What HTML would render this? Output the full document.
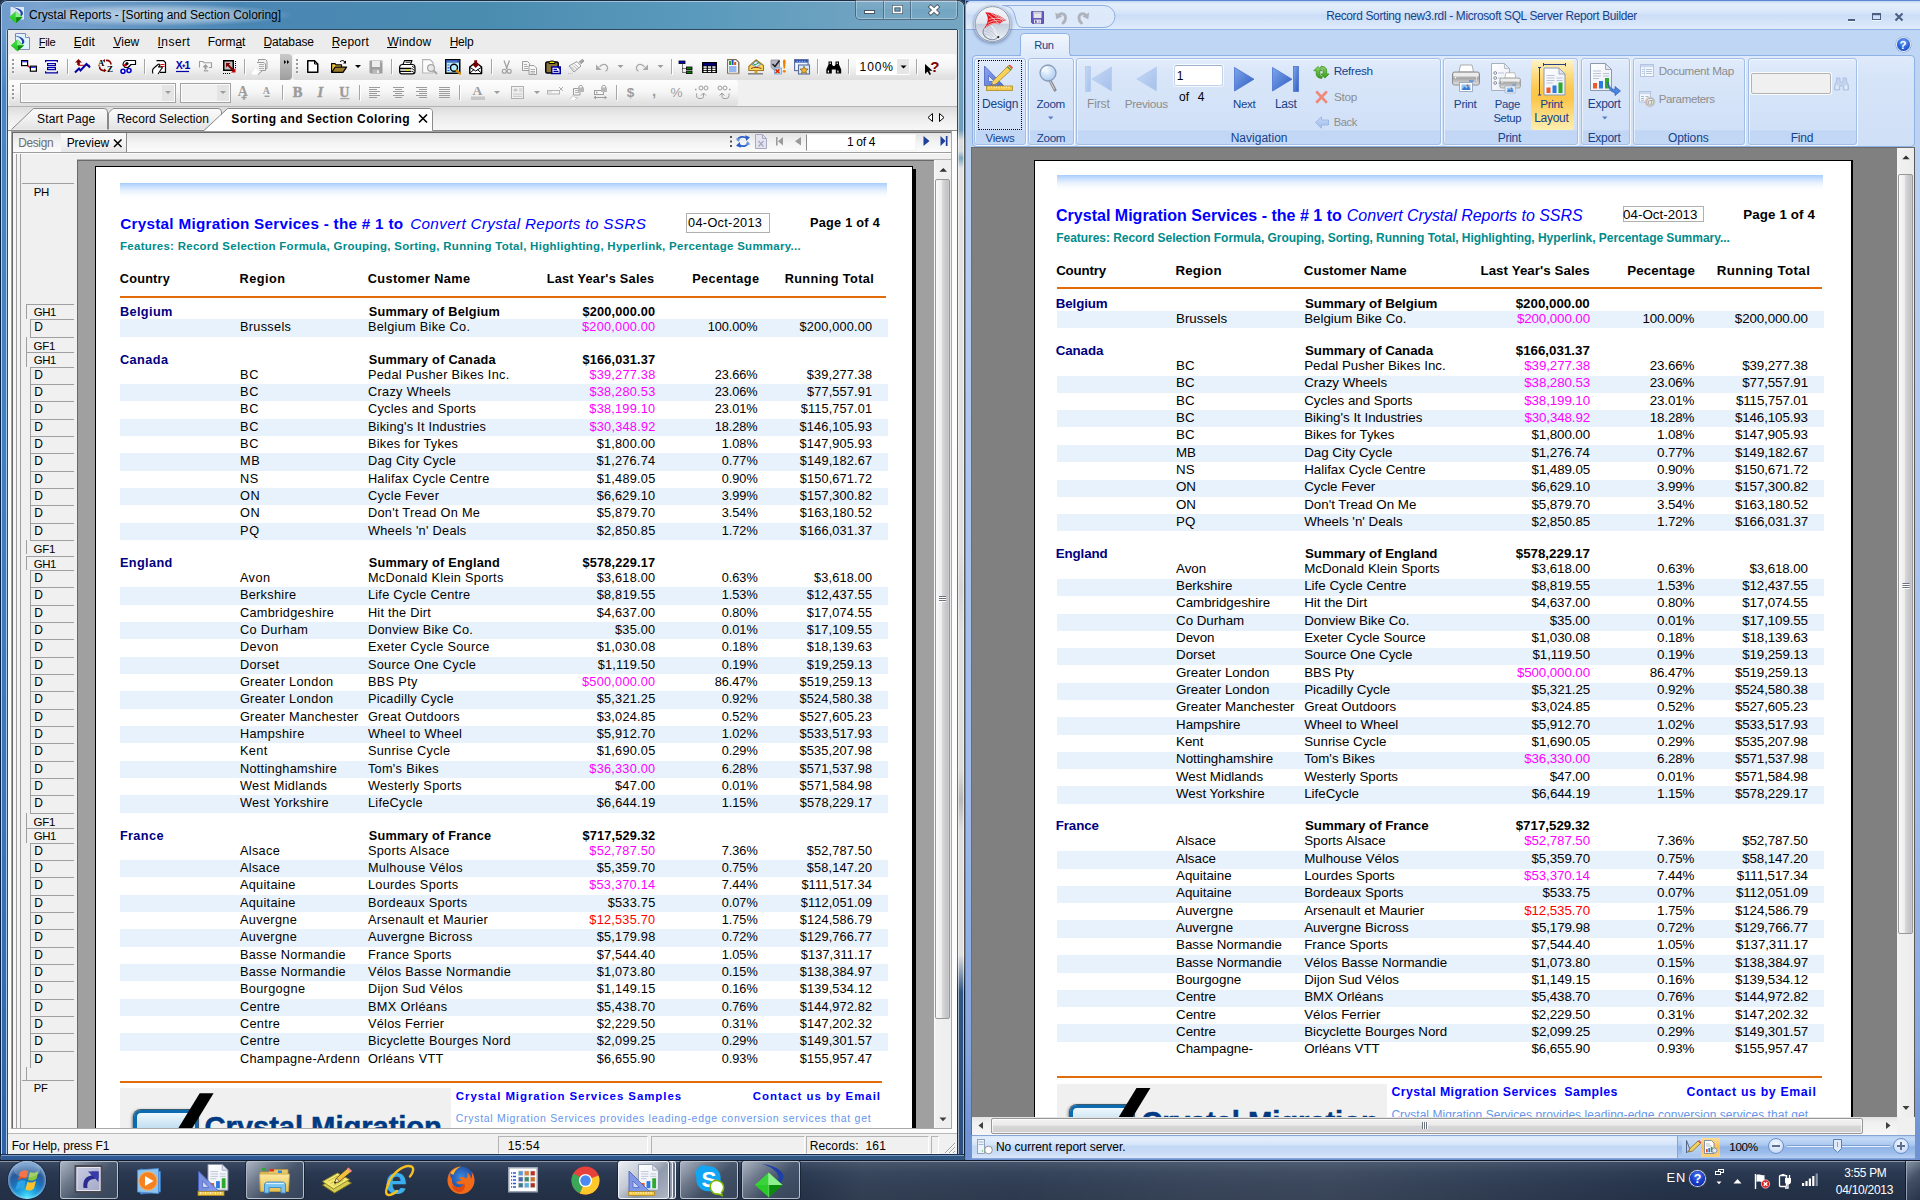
<!DOCTYPE html>
<html lang="en"><head><meta charset="utf-8"><title>Crystal Reports vs SQL Server Report Builder</title><style>
html,body{margin:0;padding:0}
body{width:1920px;height:1200px;position:relative;overflow:hidden;background:#1d2d49;font-family:"Liberation Sans",sans-serif;font-size:12px;color:#000}
.a{position:absolute;display:block}
.t{position:absolute;display:block;white-space:pre;line-height:1}
svg{overflow:visible}
</style></head>
<body>
<!-- desk -->
<div class="a" style="left:0px;top:0px;width:1920px;height:1200px;background:#1f3350;"></div>
<!-- left -->
<div class="a" style="left:0px;top:0px;width:965px;height:1161px;border-radius:7px 7px 5px 5px;background:linear-gradient(90deg,#6d9bcd 0px,#7aa3cf 40px,#4a86b4 240px,#4a8cb0 480px,#5a9abc 700px,#72a4c2 880px,#74a6c2 965px);box-shadow:inset 0 0 0 1px #1b2c45, inset 0 0 0 2px rgba(255,255,255,.45);"></div>
<div class="a" style="left:0px;top:30px;width:8px;height:1125px;background:linear-gradient(90deg,#0a2440 0,#0a2440 1px,#b4d0ee 1px,#b4d0ee 2px,#4482c6 2px,#3e7ec2 6px,#a8cae8 6px,#a8cae8 7px,#2a4a6c 7px);"></div>
<div class="a" style="left:2px;top:30px;width:4px;height:1125px;background:linear-gradient(180deg,#6a98cc 0,#4a86c6 60px,#4080c4 400px,#3a74bc 800px,#2f62a8 1125px);"></div>
<div class="a" style="left:957px;top:30px;width:8px;height:1125px;background:linear-gradient(180deg,#74a3c2 0,#6f9ebc 100px,#dcdcdc 110px,#d6dbde 121px,#7aa5c0 128px,#dfe2e4 138px,#e2e2e2 150px,#e0e0e0 520px,#d4d4d4 560px,#e0e0e0 600px,#dcdcdc 740px,#b8b8b8 770px,#dedede 800px,#e0e0e0 925px,#2f5583 962px,#2c4f80 1125px);"></div>
<div class="a" style="left:957px;top:30px;width:1px;height:1125px;background:linear-gradient(180deg,#2a4a60 0,#2a4a60 100px,#707070 112px,#707070 925px,#1a3050 962px);"></div>
<div class="a" style="left:958px;top:30px;width:1px;height:1125px;background:rgba(255,255,255,.55);"></div>
<div class="a" style="left:963px;top:30px;width:1px;height:1125px;background:rgba(255,255,255,.6);"></div>
<div class="a" style="left:964px;top:30px;width:1px;height:1125px;background:linear-gradient(180deg,#1e3a50 0,#1e3a50 100px,#555 112px,#555 925px,#0c1e38 962px);"></div>
<div class="a" style="left:1px;top:1154px;width:963px;height:7px;background:linear-gradient(180deg,#1a3050 0,#1a3050 1px,#7a9ac0 1px,#7a9ac0 2px,#2f5a98 2px,#2c5590 6px,#0c1a30 6px);border-radius:0 0 5px 5px;"></div>
<div class="a" style="left:500px;top:1156px;width:464px;height:4px;background:linear-gradient(90deg,rgba(47,85,128,0),#2f5580 60%);"></div>
<div class="a" style="left:22px;top:4px;width:270px;height:22px;background:radial-gradient(ellipse at center,rgba(255,255,255,.62) 0,rgba(255,255,255,.35) 45%,rgba(255,255,255,0) 72%);"></div>
<span class="t" style="left:29px;top:8px;font-size:12px;line-height:14px;letter-spacing:-0.015px;">Crystal Reports - [Sorting and Section Coloring]</span>
<div class="a" style="left:855px;top:0px;width:103px;height:20px;border:1px solid rgba(40,60,80,.55);border-top:none;border-radius:0 0 5px 5px;box-sizing:border-box;background:linear-gradient(180deg,rgba(255,255,255,.1) 0,rgba(255,255,255,.05) 45%,rgba(255,255,255,0) 50%,rgba(255,255,255,.04) 100%);box-shadow:inset 0 0 0 1px rgba(255,255,255,.3);"></div>
<div class="a" style="left:883px;top:1px;width:1px;height:18px;background:rgba(40,60,80,.5);box-shadow:1px 0 0 rgba(255,255,255,.3);"></div>
<div class="a" style="left:910px;top:1px;width:1px;height:18px;background:rgba(40,60,80,.5);box-shadow:1px 0 0 rgba(255,255,255,.3);"></div>
<svg class="a" style="left:855px;top:0px;" width="103" height="20" viewBox="0 0 103 20"><rect x="9.5" y="10.5" width="10" height="3" fill="#fff" stroke="#4a5560" stroke-width="1"/><rect x="37.5" y="5.5" width="10" height="8" fill="none" stroke="#4a5560" stroke-width="1"/><rect x="38.5" y="6.5" width="8" height="6" fill="none" stroke="#fff" stroke-width="1.6"/><rect x="40" y="8" width="5" height="3" fill="none" stroke="#4a5560" stroke-width=".8"/><path d="M75.8 7l6.4 6M82.2 7l-6.4 6" fill="none" stroke="#4a5560" stroke-width="4.4" stroke-linecap="square"/><path d="M75.8 7l6.4 6M82.2 7l-6.4 6" fill="none" stroke="#fff" stroke-width="2.6" stroke-linecap="square"/></svg>
<div class="a" style="left:8px;top:30px;width:949px;height:1124px;background:#f0f0f0;"></div>
<div class="a" style="left:8px;top:29px;width:949px;height:1px;background:#2a4a60;"></div>
<div class="a" style="left:8px;top:30px;width:949px;height:24px;background:#ececec;"></div>
<span class="t" style="left:38.71px;top:36px;font-size:11.18px;line-height:12px;letter-spacing:-0.322px;">File</span>
<div class="a" style="left:39.3px;top:47px;width:5.83px;height:1px;background:#000;"></div>
<span class="t" style="left:73.64px;top:35px;font-size:12px;line-height:14px;letter-spacing:0.173px;">Edit</span>
<div class="a" style="left:74.3px;top:47px;width:6.5px;height:1px;background:#000;"></div>
<span class="t" style="left:113.6px;top:35px;font-size:12px;line-height:14px;letter-spacing:-0.033px;">View</span>
<div class="a" style="left:113.3px;top:47px;width:6.5px;height:1px;background:#000;"></div>
<span class="t" style="left:157.52px;top:35px;font-size:12px;line-height:14px;letter-spacing:0.456px;">Insert</span>
<div class="a" style="left:158.3px;top:47px;width:5px;height:1px;background:#000;"></div>
<span class="t" style="left:207.64px;top:35px;font-size:12px;line-height:14px;letter-spacing:-0.044px;">Format</span>
<div class="a" style="left:235.5px;top:47px;width:6px;height:1px;background:#000;"></div>
<span class="t" style="left:263.39px;top:35px;font-size:12px;line-height:14px;letter-spacing:-0.103px;">Database</span>
<div class="a" style="left:264.05px;top:47px;width:7.17px;height:1px;background:#000;"></div>
<span class="t" style="left:331.64px;top:35px;font-size:12px;line-height:14px;letter-spacing:0.232px;">Report</span>
<div class="a" style="left:332.3px;top:47px;width:7.17px;height:1px;background:#000;"></div>
<span class="t" style="left:387.6px;top:35px;font-size:12px;line-height:14px;letter-spacing:0.196px;">Window</span>
<div class="a" style="left:387.3px;top:47px;width:9.83px;height:1px;background:#000;"></div>
<span class="t" style="left:449.64px;top:35px;font-size:12px;line-height:14px;letter-spacing:-0.173px;">Help</span>
<div class="a" style="left:450.3px;top:47px;width:7.17px;height:1px;background:#000;"></div>
<svg class="a" style="left:0;top:0;pointer-events:none" width="1920" height="1200" viewBox="0 0 1920 1200"><g transform="translate(9,7)"><rect x="1.5" y="0" width="13.5" height="12.5" fill="#fff" opacity=".75"/><g transform="translate(.3,.2)"><g transform="scale(0.47)"><path d="M7 0C18 1 29 6 29 13C29 17 26 19.5 21.5 20C24 17.5 25 14.5 23.5 11C21.5 6.5 15 2 7 0z" fill="#1c3fa8"/><path d="M14 9L28 21.5L14 34L0 21.5z" fill="#14b814"/><path d="M14 9L28 21.5H0z" fill="#58e058"/><path d="M14 9V34L0 21.5z" fill="#30d030" opacity=".75"/><path d="M14 9L28 21.5H14z" fill="#b0f8b0" opacity=".6"/><path d="M14 21.5L28 21.5L14 34z" fill="#0a8a0a"/><path d="M14 9V34" stroke="#d8ffd8" stroke-width=".6" opacity=".7"/></g></g></g><g transform="translate(11,33)"><path d="M4.5 .5H14.5L18.5 4.5V16.5H4.5z" fill="#dff4ff" stroke="#8a8ab8" stroke-width="1"/><path d="M14.5 .5V4.5H18.5" fill="#fff" stroke="#8a8ab8" stroke-width="1"/><g transform="translate(0,2.5)"><g transform="scale(0.46)"><path d="M7 0C18 1 29 6 29 13C29 17 26 19.5 21.5 20C24 17.5 25 14.5 23.5 11C21.5 6.5 15 2 7 0z" fill="#1c3fa8"/><path d="M14 9L28 21.5L14 34L0 21.5z" fill="#14b814"/><path d="M14 9L28 21.5H0z" fill="#58e058"/><path d="M14 9V34L0 21.5z" fill="#30d030" opacity=".75"/><path d="M14 9L28 21.5H14z" fill="#b0f8b0" opacity=".6"/><path d="M14 21.5L28 21.5L14 34z" fill="#0a8a0a"/><path d="M14 9V34" stroke="#d8ffd8" stroke-width=".6" opacity=".7"/></g></g></g></svg>
<div class="a" style="left:9px;top:54px;width:271px;height:26px;background:linear-gradient(180deg,#fdfdfd 0,#f6f6f6 45%,#e3e3e3 85%,#dedede 100%);border-radius:3px 0 0 3px;"></div>
<div class="a" style="left:280px;top:54px;width:12px;height:26px;background:linear-gradient(180deg,#c9c9c9 0,#9e9e9e 100%);border-radius:0 4px 4px 0;"></div>
<div class="a" style="left:293px;top:54px;width:663px;height:26px;background:linear-gradient(180deg,#fdfdfd 0,#f6f6f6 45%,#e3e3e3 85%,#dedede 100%);border-radius:3px;"></div>
<div class="a" style="left:9px;top:80px;width:729px;height:26px;background:linear-gradient(180deg,#fdfdfd 0,#f6f6f6 45%,#e3e3e3 85%,#dedede 100%);border-radius:3px;"></div>
<svg class="a" style="left:0;top:0;pointer-events:none" width="1920" height="1200" viewBox="0 0 1920 1200"><rect x="12" y="59" width="2" height="2" fill="#9a9a9a"/><rect x="14" y="61" width="1" height="1" fill="#fff"/><rect x="12" y="63" width="2" height="2" fill="#9a9a9a"/><rect x="14" y="65" width="1" height="1" fill="#fff"/><rect x="12" y="67" width="2" height="2" fill="#9a9a9a"/><rect x="14" y="69" width="1" height="1" fill="#fff"/><rect x="12" y="71" width="2" height="2" fill="#9a9a9a"/><rect x="14" y="73" width="1" height="1" fill="#fff"/><rect x="296" y="59" width="2" height="2" fill="#9a9a9a"/><rect x="298" y="61" width="1" height="1" fill="#fff"/><rect x="296" y="63" width="2" height="2" fill="#9a9a9a"/><rect x="298" y="65" width="1" height="1" fill="#fff"/><rect x="296" y="67" width="2" height="2" fill="#9a9a9a"/><rect x="298" y="69" width="1" height="1" fill="#fff"/><rect x="296" y="71" width="2" height="2" fill="#9a9a9a"/><rect x="298" y="73" width="1" height="1" fill="#fff"/><g transform="translate(21,60)"><path d="M6.5 5.5L10 8.5" stroke="#e00000" stroke-width="1.3"/><rect x=".6" y=".6" width="6" height="5" fill="#fff" stroke="#000" stroke-width="1.2"/><rect x="1.2" y="1.2" width="4.8" height="1.1" fill="#2020ff"/><rect x="9.4" y="6.2" width="6" height="5" fill="#fff" stroke="#000" stroke-width="1.2"/><rect x="10" y="6.8" width="4.8" height="1.1" fill="#2020ff"/></g><g transform="translate(45,60)"><path d="M.6 2.2V.6H12.4V2.2 M.6 11.3V12.9H12.4V11.3" fill="none" stroke="#0000a8" stroke-width="1.2"/><rect x="2.6" y="3.6" width="7.8" height="2" fill="#fff" stroke="#0000a8" stroke-width="1.2"/><rect x="2.6" y="7.6" width="7.8" height="2" fill="#fff" stroke="#0000a8" stroke-width="1.2"/></g><path d="M67.5 59V74" stroke="#a6a6a6" stroke-width="1"/><path d="M68.5 60V75" stroke="#fff" stroke-width="1"/><g transform="translate(75,59)"><path d="M3.5 0L7 3.5H4.8V6H2.2V3.5H0z" fill="#800000"/><path d="M3 6.3H15" stroke="#c00000" stroke-width="1"/><path d="M0 13.5L4 9.5L5.5 11.5L11.5 5L15 8.5" fill="none" stroke="#0000a8" stroke-width="2"/></g><g transform="translate(98,59)"><text x="0" y="6.5" font-family="'Liberation Serif',serif" font-size="8.5" font-weight="bold" fill="#000" text-anchor="start" >A</text><text x="9" y="13" font-family="'Liberation Serif',serif" font-size="9" font-weight="bold" fill="#000" text-anchor="start" >Z</text><path d="M8 1.5C11 1 13 3 13 5.5" fill="none" stroke="#800000" stroke-width="1.6"/><path d="M7 0v3.5l-2.5-1.7z" fill="#800000"/><path d="M6.5 11.5C3.5 12 1.5 10 1.5 7.5" fill="none" stroke="#800000" stroke-width="1.6"/><path d="M6 9.5v3.8l2.6-1.9z" fill="#800000"/></g><g transform="translate(120,59)"><path d="M3 6C3 3 5 1.5 7 1.5H15.5V5.5H11L8 8.5H5z" fill="#fff" stroke="#000" stroke-width="1.2" stroke-linejoin="round"/><circle cx="5.5" cy="6" r="1.6" fill="#e00000"/><circle cx="7" cy="4.5" r="1.5" fill="#000"/><circle cx="3" cy="12.3" r="2" fill="#fff" stroke="#0000c8" stroke-width="1.6"/><circle cx="9" cy="11.5" r="2" fill="#fff" stroke="#0000c8" stroke-width="1.6"/></g><path d="M144.5 59V74" stroke="#a6a6a6" stroke-width="1"/><path d="M145.5 60V75" stroke="#fff" stroke-width="1"/><g transform="translate(152,60)"><path d="M4.5 .6H11.5L13.5 2.6V12.4H8" fill="#fff" stroke="#000" stroke-width="1.2"/><path d="M8.5 4.5h4M8.5 6.5h4" stroke="#e00000" stroke-width="1"/><path d="M1 13.5C0 11 .5 9 2.5 7.5L6 4.5C7.5 3.5 8.5 5 7.5 6L6.5 7H9.5C10.5 7 10.5 8.5 9.5 8.8L6 14" fill="#fff" stroke="#000" stroke-width="1.1" stroke-linejoin="round"/></g><g transform="translate(176,61)"><text x="-0.3" y="8" font-family="'Liberation Sans',serif" font-size="10.5" font-weight="bold" fill="#0000a8" text-anchor="start" >X</text><text x="8.6" y="8" font-family="'Liberation Sans',serif" font-size="10.5" font-weight="bold" fill="#0000a8" text-anchor="start" >1</text><path d="M6.3 4.8h3M7.8 3.3v3" stroke="#0000a8" stroke-width="1"/><path d="M0 10.5H13" stroke="#0000a8" stroke-width="1.2"/></g><g transform="translate(199,61)"><path d="M.5 6.5V.5H4L5 1.8H12.5V6.5H10" fill="none" stroke="#9c9c9c" stroke-width="1.1"/><path d="M6.5 3l3 3.2h-2V8.5h-2V6.2h-2z" fill="#9c9c9c"/><path d="M4.8 9.8h4.4" stroke="#9c9c9c" stroke-width="1.2"/></g><g transform="translate(223,60)"><rect x=".75" y=".75" width="9.5" height="9.5" fill="#c0c0c0" stroke="#000" stroke-width="1.5"/><path d="M12.5 1v8" stroke="#000" stroke-width="1" stroke-dasharray="1 1"/><path d="M0 13.5h8" stroke="#000" stroke-width="1" stroke-dasharray="1 1"/><path d="M4.5 4.5L11 11" stroke="#800000" stroke-width="1.8"/><path d="M3 3h4.5L3 7.5z" fill="#800000"/><path d="M12.5 12.5H8L12.5 8z" fill="#c00000"/></g><path d="M244.5 59V74" stroke="#a6a6a6" stroke-width="1"/><path d="M245.5 60V75" stroke="#fff" stroke-width="1"/><g transform="translate(252,59)"><path d="M6.5 2.5V.5H13.5L15 2V9.5H13.5M5 3.5H12L13.5 5V11.5H7" fill="#f4f4f4" stroke="#9c9c9c" stroke-width="1"/><path d="M7 5.5h5M7 7.5h5M7 9.5h5" stroke="#9c9c9c" stroke-width=".8"/><path d="M0 13.5L3.5 9L6 11.5H9L5.5 15.5H0z" fill="#fff"/><path d="M6 15.5L10 12" stroke="#9c9c9c" stroke-width="1"/></g><g transform="translate(284,60)"><path d="M0 0l2.2 2L0 4zM3 0l2.2 2L3 4z" fill="#000"/></g><g transform="translate(307,60)"><path d="M.75 .75H7.5L10.75 4V12.25H.75z" fill="#fff" stroke="#000" stroke-width="1.5" stroke-linejoin="round"/><path d="M7.5 .75V4H10.75" fill="none" stroke="#000" stroke-width="1"/></g><g transform="translate(331,59)"><path d="M.6 13.4V4.6H4L5 5.8H10.5V8" fill="#f3c53c" stroke="#000" stroke-width="1.2" stroke-linejoin="round"/><path d="M.8 13.4L4 8.2H15.6L12 13.4z" fill="#9c7a2c" stroke="#000" stroke-width="1.2" stroke-linejoin="round"/><path d="M9 2.8C10.5 1 13 1.2 14 3.2" fill="none" stroke="#000" stroke-width="1"/><path d="M15 1.5v3h-3z" fill="#000"/></g><path d="M355 65h6l-3 3z" fill="#000"/><g transform="translate(369,60)"><path d="M.5 .5H13.5V13.5H1.5L.5 12.5z" fill="#9e9e9e"/><rect x="3" y="1" width="8" height="6" fill="#ececec"/><rect x="3.5" y="9.5" width="7" height="4" fill="#b9b9b9"/><rect x="8" y="10.3" width="1.8" height="2.7" fill="#f0f0f0"/><rect x="12" y="1.5" width="1" height="1" fill="#e0e0e0"/></g><path d="M391.5 59V74" stroke="#a6a6a6" stroke-width="1"/><path d="M392.5 60V75" stroke="#fff" stroke-width="1"/><g transform="translate(399,60)"><path d="M4 4.5L5.5 .6H13L11.5 4.5" fill="#fff" stroke="#000" stroke-width="1.1" stroke-linejoin="round"/><path d="M6.5 2.3h5" stroke="#000" stroke-width=".8"/><path d="M.6 7.5C.6 5.5 2 4.5 3.5 4.5H13.5C15 4.5 16 5.5 16 7.5V11.5C16 13 15 13.8 13.5 13.8H3C1.5 13.8 .6 13 .6 11.5z" fill="#fff" stroke="#000" stroke-width="1.2"/><path d="M1 8.5H12.5M1 11.3H12.5" stroke="#000" stroke-width="1.3"/><rect x="7" y="9.5" width="3" height="1.2" fill="#f3e000"/><path d="M13 6l2.5 2M13 8.5l2.5 2M13 11l2 1.6" stroke="#000" stroke-width=".9"/></g><g transform="translate(422,59)"><path d="M.6 .6H8L11 3.6V14H.6z" fill="#fbfbfb" stroke="#b4b4b4" stroke-width="1.1"/><circle cx="9" cy="9" r="3.4" fill="#e9e9e9" stroke="#a9a9a9" stroke-width="1.3"/><path d="M11.6 11.6L15 15" stroke="#a2a2a2" stroke-width="1.8"/></g><g transform="translate(445,59)"><rect x=".75" y=".75" width="14" height="13.5" fill="#bfefff" stroke="#000" stroke-width="1.5"/><rect x="1" y="1" width="13.5" height="2.6" fill="#2a4fb0"/><path d="M2.5 2.2h10" stroke="#9fd0ff" stroke-width=".8" stroke-dasharray="1 1"/><path d="M2.5 6h2M2.5 8.8h2M2.5 11.5h2" stroke="#1e55d8" stroke-width="1.2"/><circle cx="9" cy="8.8" r="3.5" fill="#b8ecff" stroke="#000" stroke-width="1.4"/><path d="M11.8 11.6L15 14.8" stroke="#e08a00" stroke-width="2.2" stroke-linecap="round"/></g><g transform="translate(469,60)"><path d="M.75 7L6.7 2.2L12.6 7V13.6H.75z" fill="#fff" stroke="#000" stroke-width="1.4" stroke-linejoin="round"/><path d="M1 13L5 9.5M12.3 13L8.5 9.5M1.2 7.5L6.7 11L12.2 7.5" fill="none" stroke="#000" stroke-width="1"/><path d="M5.3 .3H8.1V4H10.5L6.7 8L2.9 4H5.3z" fill="#800000"/></g><path d="M491.5 59V74" stroke="#a6a6a6" stroke-width="1"/><path d="M492.5 60V75" stroke="#fff" stroke-width="1"/><g transform="translate(502,60)"><path d="M2 .5L5.2 9M7.5 .5L4.3 9" stroke="#9c9c9c" stroke-width="1.2" fill="none"/><circle cx="2.3" cy="11.3" r="2" fill="none" stroke="#9c9c9c" stroke-width="1.1"/><circle cx="7.2" cy="11.3" r="2" fill="none" stroke="#9c9c9c" stroke-width="1.1"/></g><g transform="translate(522,61)"><path d="M.5 .5H5.5L7.5 2.5V9.5H.5z" fill="#f6f6f6" stroke="#9c9c9c"/><path d="M2 3.5h3M2 5.5h4M2 7.5h4" stroke="#9c9c9c" stroke-width=".8"/><path d="M7 4.5H12L14.5 7V13.5H7z" fill="#f6f6f6" stroke="#9c9c9c"/><path d="M8.5 8.5h4.5M8.5 10.5h4.5M8.5 12h4.5" stroke="#9c9c9c" stroke-width=".8"/></g><g transform="translate(545,60)"><rect x=".75" y="2" width="12.5" height="11" rx="1.5" fill="#8a7338" stroke="#000" stroke-width="1.5"/><path d="M4 2.5C4 .5 10 .5 10 2.5V3.5H4z" fill="#f0e000" stroke="#000" stroke-width="1"/><rect x="6.75" y="7" width="8.5" height="6.5" fill="#fff" stroke="#0000a0" stroke-width="1.5"/><path d="M8.5 9.3h3.5M8.5 11.3h5" stroke="#0000a0" stroke-width="1.2"/><path d="M12.5 6.5l3 3" stroke="#0000a0" stroke-width="1.2"/></g><g transform="translate(568,59)"><path d="M11 3L14.5 .3L16 2L12.8 5" fill="#a6a6a6" stroke="#9c9c9c" stroke-width="1"/><path d="M1 7L9 2.5L13 7L6 13z" fill="#f8f8f8" stroke="#9c9c9c" stroke-width="1"/><path d="M3 7.5L7 11.5M5 6.3L9 10.3M7 5.2L10.8 9" stroke="#9c9c9c" stroke-width=".8"/><path d="M0 14.5h5" stroke="#b8b8b8" stroke-width="1" stroke-dasharray="1 1.2"/></g><g transform="translate(596,62)"><path d="M3.5 5C5 2.5 8.5 1.5 10.5 3.5C12.5 5.5 11.5 8.5 9.5 9" fill="none" stroke="#a8a8a8" stroke-width="1.3"/><path d="M0 2.5V8H5.5z" fill="#a8a8a8"/></g><path d="M617.5 65h6l-3 3z" fill="#9c9c9c"/><g transform="translate(636,62)"><path d="M8.5 5C7 2.5 3.5 1.5 1.5 3.5C-.5 5.5 .5 8.5 2.5 9" fill="none" stroke="#a8a8a8" stroke-width="1.3"/><path d="M12 2.5V8H6.5z" fill="#a8a8a8"/></g><path d="M657.5 65h6l-3 3z" fill="#9c9c9c"/><path d="M671.5 59V74" stroke="#a6a6a6" stroke-width="1"/><path d="M672.5 60V75" stroke="#fff" stroke-width="1"/><g transform="translate(679,61)"><rect x="0" y="0" width="6" height="2.6" fill="#0000e0" stroke="#000" stroke-width=".8"/><path d="M3.5 3.5V11.5M3.5 7.5H7M3.5 11.5H7" stroke="#000" stroke-width="1" stroke-dasharray="1 1" fill="none"/><rect x="7.5" y="6" width="5.5" height="2.6" fill="#008000" stroke="#000" stroke-width=".8"/><rect x="7.5" y="10" width="5.5" height="2.6" fill="#008000" stroke="#000" stroke-width=".8"/></g><g transform="translate(702,62)"><rect x="0" y="0" width="15" height="11" fill="#000"/><rect x="1.5" y="1.2" width="12" height="2.3" fill="#000080"/><rect x="1.5" y="4.3" width="3.2" height="1.5" fill="#fff"/><rect x="5.9" y="4.3" width="3.2" height="1.5" fill="#fff"/><rect x="10.3" y="4.3" width="3.2" height="1.5" fill="#fff"/><rect x="1.5" y="6.6" width="3.2" height="1.5" fill="#fff"/><rect x="5.9" y="6.6" width="3.2" height="1.5" fill="#fff"/><rect x="10.3" y="6.6" width="3.2" height="1.5" fill="#fff"/><rect x="1.5" y="8.9" width="3.2" height="1.2" fill="#fff"/><rect x="5.9" y="8.9" width="3.2" height="1.2" fill="#fff"/><rect x="10.3" y="8.9" width="3.2" height="1.2" fill="#fff"/></g><g transform="translate(727,59)"><path d="M.6 .6H9L11.5 3V14.2H.6z" fill="#fff" stroke="#7a6a58" stroke-width="1.1"/><rect x="2" y="2" width="2" height="4" fill="#2aa02a"/><rect x="4.6" y="1" width="2" height="5" fill="#1e50d0"/><rect x="7.2" y="3" width="2" height="3" fill="#e05010"/><path d="M2 8h7.5M2 10h7.5M2 12h7.5" stroke="#2a70e0" stroke-width="1.1"/><path d="M12.3 3V14.8H1.5" stroke="#b0a898" stroke-width="1" fill="none"/></g><g transform="translate(748,59)"><path d="M.8 7.5L8 .8L15.5 6.5V11.5H.8z" fill="#f5d860" stroke="#a07820" stroke-width="1.1" stroke-linejoin="round"/><path d="M4 5.5L8 2L12.5 5.5L8.5 8z" fill="#d8f0ff" stroke="#5a88c8" stroke-width=".8"/><path d="M3 9.5C6 8 10 8 13.5 9.5" stroke="#a03020" stroke-width="1" fill="none"/><path d="M5 4.5L7 6L11 3.5" stroke="#2a9a30" stroke-width="1" fill="none"/><rect x="6.5" y="11.5" width="3" height="2.5" fill="#e0a020"/><path d="M0 14.8H15" stroke="#7a7a7a" stroke-width="1.4"/></g><g transform="translate(771,59)"><path d="M0 1H8.5V7C8.5 9.5 6 11 4.2 11.5C2.5 11 0 9.5 0 7z" fill="#b8b8c8" stroke="#8a8a9a" stroke-width=".8"/><path d="M1.5 5L4 7.5L8.5 1.5" fill="none" stroke="#202020" stroke-width="1.5"/><rect x="3.5" y="9" width="7" height="6" fill="#bfe8ff" stroke="#7aa0c8" stroke-width=".8"/><path d="M4.5 10.3L8.5 14M8.5 10.3L4.5 14" stroke="#e02800" stroke-width="1.6"/><path d="M13.3 .5C14.6 .5 14.8 2 14.6 4L14 9.5H12.6L12 4C11.8 2 12 .5 13.3 .5z" fill="#f08000"/><circle cx="13.3" cy="12.3" r="1.4" fill="#f08000"/></g><g transform="translate(794,59)"><rect x=".6" y=".6" width="13.5" height="11" fill="#eef6ff" stroke="#5a6a9a" stroke-width="1.1"/><rect x="1" y="1" width="12.8" height="2.6" fill="#2a4fb0"/><path d="M2.5 2.3h9" stroke="#bcd8ff" stroke-width=".8" stroke-dasharray="1.5 1"/><rect x="4.5" y="6" width="11" height="9" fill="#d8ecff" stroke="#5a6a9a" stroke-width="1.1"/><path d="M10 7.2L11.2 9.8L14 10.1L11.9 12L12.5 14.7L10 13.3L7.5 14.7L8.1 12L6 10.1L8.8 9.8z" fill="#f5b030" stroke="#7a5a10" stroke-width=".7"/></g><path d="M817.5 59V74" stroke="#a6a6a6" stroke-width="1"/><path d="M818.5 60V75" stroke="#fff" stroke-width="1"/><g transform="translate(826,60)"><path d="M2.5 1.5H6V4.5L7 6H8.5L9.5 4.5V1.5H13V4.5L15.2 9.5V13.5H9.8V9.5H5.8V13.5H.3V9.5L2.5 4.5z" fill="#000"/><rect x="3.7" y="2.5" width="1.1" height="1.5" fill="#fff"/><rect x="10.7" y="2.5" width="1.1" height="1.5" fill="#fff"/><rect x="1.8" y="10.5" width="1.2" height="2" fill="#fff"/><rect x="11.3" y="10.5" width="1.2" height="2" fill="#fff"/></g><path d="M848.5 59V74" stroke="#a6a6a6" stroke-width="1"/><path d="M849.5 60V75" stroke="#fff" stroke-width="1"/><rect x="856" y="58" width="53.5" height="17" fill="#fff"/><rect x="897" y="59" width="12" height="15" fill="#e6e6e6"/><path d="M900.5 65.5h6l-3 3z" fill="#000"/><path d="M916.5 59V74" stroke="#a6a6a6" stroke-width="1"/><path d="M917.5 60V75" stroke="#fff" stroke-width="1"/><g transform="translate(924,60)"><path d="M1 4V14L3.5 11.5L5.5 15L7 14.2L5.2 10.8H8.5z" fill="#000"/><text x="6.3" y="12" font-family="'Liberation Sans',serif" font-size="15" font-weight="bold" fill="#800000" text-anchor="start" >?</text></g><rect x="12" y="85" width="2" height="2" fill="#9a9a9a"/><rect x="14" y="87" width="1" height="1" fill="#fff"/><rect x="12" y="89" width="2" height="2" fill="#9a9a9a"/><rect x="14" y="91" width="1" height="1" fill="#fff"/><rect x="12" y="93" width="2" height="2" fill="#9a9a9a"/><rect x="14" y="95" width="1" height="1" fill="#fff"/><rect x="12" y="97" width="2" height="2" fill="#9a9a9a"/><rect x="14" y="99" width="1" height="1" fill="#fff"/><rect x="20.5" y="83.5" width="155" height="19" fill="#f0f0f0" stroke="#a2a2a2"/><rect x="21.5" y="84.5" width="153" height="17" fill="none" stroke="#fcfcfc"/><rect x="162" y="85" width="12" height="16" fill="#e4e4e4"/><path d="M165 91h6l-3 3z" fill="#9c9c9c"/><rect x="180.5" y="83.5" width="50" height="19" fill="#f0f0f0" stroke="#a2a2a2"/><rect x="181.5" y="84.5" width="48" height="17" fill="none" stroke="#fcfcfc"/><rect x="217" y="85" width="12" height="16" fill="#e4e4e4"/><path d="M220 91h6l-3 3z" fill="#9c9c9c"/><g transform="translate(238,85)"><text x="-0.3" y="10.5" font-family="'Liberation Serif',serif" font-size="14" font-weight="bold" fill="#9c9c9c" text-anchor="start" >A</text><path d="M3.5 12.5h5M6 10v5" stroke="#9c9c9c" stroke-width="1.5"/></g><g transform="translate(263,86)"><text x="-0.2" y="8" font-family="'Liberation Serif',serif" font-size="10" font-weight="bold" fill="#9c9c9c" text-anchor="start" >A</text><path d="M1.5 10.3h5" stroke="#9c9c9c" stroke-width="1.4"/></g><path d="M282.5 85V100" stroke="#a6a6a6" stroke-width="1"/><path d="M283.5 86V101" stroke="#fff" stroke-width="1"/><g transform="translate(293,87)"><text x="-0.3" y="10.3" font-family="'Liberation Serif',serif" font-size="14.5" font-weight="bold" fill="#9c9c9c" text-anchor="start" stroke="#9c9c9c" stroke-width=".5">B</text></g><g transform="translate(316,87)"><text x="1.5" y="10.3" font-family="'Liberation Serif',serif" font-size="14.5" font-weight="bold" fill="#9c9c9c" text-anchor="start" font-style="italic" stroke="#9c9c9c" stroke-width=".4">I</text></g><g transform="translate(340,87)"><text x="-0.8" y="9.6" font-family="'Liberation Serif',serif" font-size="14" font-weight="bold" fill="#9c9c9c" text-anchor="start" stroke="#9c9c9c" stroke-width=".4">U</text><path d="M0 11.7h9.5" stroke="#9c9c9c" stroke-width="1"/></g><path d="M359.5 85V100" stroke="#a6a6a6" stroke-width="1"/><path d="M360.5 86V101" stroke="#fff" stroke-width="1"/><path d="M369 87.5H380" stroke="#9c9c9c" stroke-width="1"/><path d="M369 89.5H377" stroke="#9c9c9c" stroke-width="1"/><path d="M369 91.5H380" stroke="#9c9c9c" stroke-width="1"/><path d="M369 93.5H377" stroke="#9c9c9c" stroke-width="1"/><path d="M369 95.5H380" stroke="#9c9c9c" stroke-width="1"/><path d="M369 97.5H377" stroke="#9c9c9c" stroke-width="1"/><path d="M393 87.5H404" stroke="#9c9c9c" stroke-width="1"/><path d="M395 89.5H402" stroke="#9c9c9c" stroke-width="1"/><path d="M393 91.5H404" stroke="#9c9c9c" stroke-width="1"/><path d="M395 93.5H402" stroke="#9c9c9c" stroke-width="1"/><path d="M393 95.5H404" stroke="#9c9c9c" stroke-width="1"/><path d="M395 97.5H402" stroke="#9c9c9c" stroke-width="1"/><path d="M416 87.5H427" stroke="#9c9c9c" stroke-width="1"/><path d="M419 89.5H427" stroke="#9c9c9c" stroke-width="1"/><path d="M416 91.5H427" stroke="#9c9c9c" stroke-width="1"/><path d="M419 93.5H427" stroke="#9c9c9c" stroke-width="1"/><path d="M416 95.5H427" stroke="#9c9c9c" stroke-width="1"/><path d="M419 97.5H427" stroke="#9c9c9c" stroke-width="1"/><path d="M439 87.5H450" stroke="#9c9c9c" stroke-width="1"/><path d="M439 89.5H450" stroke="#9c9c9c" stroke-width="1"/><path d="M439 91.5H450" stroke="#9c9c9c" stroke-width="1"/><path d="M439 93.5H450" stroke="#9c9c9c" stroke-width="1"/><path d="M439 95.5H450" stroke="#9c9c9c" stroke-width="1"/><path d="M439 97.5H450" stroke="#9c9c9c" stroke-width="1"/><path d="M459.5 85V100" stroke="#a6a6a6" stroke-width="1"/><path d="M460.5 86V101" stroke="#fff" stroke-width="1"/><g transform="translate(471,85)"><text x="1.5" y="10" font-family="'Liberation Serif',serif" font-size="13.5" font-weight="bold" fill="#9c9c9c" text-anchor="start" >A</text><rect x="0" y="11.5" width="14" height="3.5" fill="#c6c6c6"/></g><path d="M494 91h6l-3 3z" fill="#9c9c9c"/><g transform="translate(511,86)"><rect x=".5" y=".5" width="12" height="12" fill="#f2f2f2" stroke="#b0b0b0"/><ellipse cx="4.5" cy="4" rx="2.2" ry="1.6" fill="#c8c8c8"/><path d="M8 3h3.5M8 5h3.5M2 8h9.5M2 10.3h9.5" stroke="#c4c4c4" stroke-width="1"/></g><path d="M534 91h6l-3 3z" fill="#9c9c9c"/><g transform="translate(547,86)"><rect x=".5" y="4.5" width="12" height="3.5" fill="#f6f6f6" stroke="#b4b4b4"/><rect x="2" y="5.5" width="2" height="1.6" fill="#fff" stroke="#c8c8c8" stroke-width=".6"/><path d="M12 1l4 4M16 1l-4 4" stroke="#b0b0b0" stroke-width="1"/></g><g transform="translate(570,85)"><path d="M3.5 3.5H10V10H3.5z" fill="#f8f8f8" stroke="#9c9c9c"/><path d="M5 5.5h4M5 7.5h4" stroke="#9c9c9c" stroke-width=".8"/><path d="M9 3V1.5C9 0 12.5 0 12.5 1.5V3" fill="none" stroke="#9c9c9c" stroke-width="1"/><rect x="8" y="2.5" width="6" height="4.5" fill="#b8b8b8"/><path d="M0 14.5L3 10.5L5 12.5H8L5 15" fill="#fff" stroke="#c0c0c0" stroke-width=".8"/></g><g transform="translate(594,85)"><rect x=".5" y="5.5" width="9" height="4" fill="#f8f8f8" stroke="#9c9c9c"/><rect x="2" y="6.8" width="1.5" height="1.5" fill="#9c9c9c"/><path d="M8 3V1.5C8 0 11.5 0 11.5 1.5V3" fill="none" stroke="#9c9c9c" stroke-width="1"/><rect x="7" y="2.5" width="6" height="4.5" fill="#b8b8b8"/><path d="M0 12.5H12.5M2 11l-2 1.5l2 1.5M10.5 11l2 1.5l-2 1.5" fill="none" stroke="#9c9c9c" stroke-width="1"/></g><path d="M616.5 85V100" stroke="#a6a6a6" stroke-width="1"/><path d="M617.5 86V101" stroke="#fff" stroke-width="1"/><g transform="translate(627,86)"><text x="-0.2" y="11" font-family="'Liberation Sans',serif" font-size="13.5" font-weight="bold" fill="#9c9c9c" text-anchor="start" >$</text></g><g transform="translate(652,86)"><text x="0" y="10" font-family="'Liberation Sans',serif" font-size="15" font-weight="bold" fill="#9c9c9c" text-anchor="start" >,</text></g><g transform="translate(671,86)"><text x="-0.5" y="11" font-family="'Liberation Sans',serif" font-size="13.5" font-weight="normal" fill="#9c9c9c" text-anchor="start" >%</text></g><g transform="translate(694,85)"><circle cx="7" cy="3" r="2" fill="none" stroke="#9c9c9c" stroke-width="1"/><circle cx="12" cy="3" r="2" fill="none" stroke="#9c9c9c" stroke-width="1"/><rect x="1" y="3.8" width="1.5" height="1.5" fill="#9c9c9c"/><path d="M2.5 8.5V10.5C2.5 13 4 13.5 6 13.5H7.5C9.5 13.5 9.5 12 9.5 10V8.5M7 10.5L9.5 8L12 10.5" fill="none" stroke="#9c9c9c" stroke-width="1"/></g><g transform="translate(717,85)"><circle cx="3" cy="3" r="2" fill="none" stroke="#9c9c9c" stroke-width="1"/><circle cx="8" cy="3" r="2" fill="none" stroke="#9c9c9c" stroke-width="1"/><rect x="12" y="3.8" width="1.5" height="1.5" fill="#9c9c9c"/><path d="M12 8.5V10.5C12 13 10.5 13.5 8.5 13.5H7C5 13.5 5 12 5 10V8.5M2.5 10.5L5 8L7.5 10.5" fill="none" stroke="#9c9c9c" stroke-width="1"/></g></svg><span class="t" style="left:859.6px;top:60px;font-size:12px;line-height:14px;letter-spacing:0.867px;">100%</span>
<div class="a" style="left:8px;top:106px;width:949px;height:1px;background:#b4b4b4;"></div>
<div class="a" style="left:8px;top:107px;width:949px;height:24px;background:linear-gradient(180deg,#dcdcdc 0,#ececec 40%,#f8f8f8 100%);"></div>
<svg class="a" style="left:8px;top:107px;" width="949" height="26" viewBox="0 0 949 26"><defs><linearGradient id="tg" x1="0" y1="0" x2="0" y2="1"><stop offset="0" stop-color="#fbfbfb"/><stop offset=".5" stop-color="#f1f1f1"/><stop offset="1" stop-color="#e2e2e2"/></linearGradient></defs><path d="M3.5 22.5 L25.5 1.5 H96 Q99.5 1.5 99.5 5 V22.5" fill="url(#tg)" stroke="#8a8a8a"/><path d="M100.5 22.5 V6 L105 1.5 H210 Q213.5 1.5 213.5 5 V22.5" fill="url(#tg)" stroke="#8a8a8a"/><path d="M0 23.5 H196 L219.5 1.5 H421 Q424.5 1.5 424.5 5 V23.5 H949" fill="none" stroke="#8a8a8a"/><path d="M196.5 24 L220 2 H421 Q424 2 424 5 V24 Z" fill="#fff"/><path d="M0 24.5 H949" stroke="#fff"/><path d="M0 25.5 H949" stroke="#7a7a7a"/></svg>
<span class="t" style="left:37.06px;top:112px;font-size:12px;line-height:14px;letter-spacing:0.169px;">Start Page</span>
<span class="t" style="left:116.64px;top:112px;font-size:12px;line-height:14px;letter-spacing:0.067px;">Record Selection</span>
<span class="t" style="left:231.3px;top:112px;font-size:12px;line-height:14px;font-weight:bold;letter-spacing:0.456px;">Sorting and Section Coloring</span>
<svg class="a" style="left:417px;top:112px;" width="12" height="12" viewBox="0 0 12 12"><path d="M2 2.5l8 8M10 2.5l-8 8" stroke="#000" stroke-width="1.6" fill="none"/></svg>
<svg class="a" style="left:925px;top:110px;" width="24" height="16" viewBox="0 0 24 16"><path d="M7.5 3.5v8l-4.5-4z M14.5 3.5v8l4.5-4z" fill="#fff" stroke="#000" stroke-width="1"/></svg>
<div class="a" style="left:8px;top:131px;width:949px;height:997px;background:#fbfbfb;"></div>
<div class="a" style="left:11px;top:131px;width:941px;height:998px;background:#f0f0f0;border:1px solid #a0a0a0;border-right-color:#a9a9a9;border-bottom-color:#a9a9a9;box-sizing:border-box;box-shadow:inset 1px 1px 0 #696969;"></div>
<div class="a" style="left:13px;top:133px;width:938px;height:19px;background:linear-gradient(180deg,#e3e3e3 0,#f3f3f3 50%,#fbfbfb 100%);"></div>
<div class="a" style="left:13px;top:152px;width:938px;height:1px;background:#9c9c9c;"></div>
<div class="a" style="left:13px;top:153px;width:938px;height:1px;background:#fdfdfd;"></div>
<div class="a" style="left:61px;top:133px;width:66px;height:19px;background:linear-gradient(180deg,#fafafa 0,#f2f2f2 60%,#e6e6e6 100%);border-right:1px solid #8a8a8a;box-sizing:border-box;"></div>
<span class="t" style="left:18.15px;top:136px;font-size:11.88px;line-height:14px;color:#6d6d6d;letter-spacing:-0.317px;">Design</span>
<span class="t" style="left:66.64px;top:136px;font-size:12px;line-height:14px;letter-spacing:-0.01px;">Preview</span>
<svg class="a" style="left:112px;top:137px;" width="12" height="12" viewBox="0 0 12 12"><path d="M2 2.5l7.5 7.5M9.5 2.5l-7.5 7.5" stroke="#000" stroke-width="1.5" fill="none"/></svg>
<div class="a" style="left:806px;top:134px;width:110px;height:17px;background:#fff;border:1px solid #f4f4f4;border-left-color:#8a8a8a;box-sizing:border-box;"></div>
<span class="t" style="left:847px;top:135px;font-size:12px;line-height:14px;letter-spacing:-0.32px;">1 of 4</span>
<svg class="a" style="left:0;top:0;pointer-events:none" width="1920" height="1200" viewBox="0 0 1920 1200"><rect x="730" y="136.0" width="2" height="2" fill="#555"/><rect x="730" y="140.5" width="2" height="2" fill="#555"/><rect x="730" y="145.0" width="2" height="2" fill="#555"/><g transform="translate(735,134)"><path d="M2.3 6.2C3.5 2.8 8.5 1.6 12 4.2" fill="none" stroke="#2a5ec8" stroke-width="1.7"/><path d="M10.2 1.2L15 3.2L11.2 7z" fill="#2a5ec8"/><path d="M.8 4.6L5.6 4L3.6 8z" fill="#6a96e0"/><path d="M13.7 8.8C12.5 12.2 7.5 13.4 4 10.8" fill="none" stroke="#2a5ec8" stroke-width="1.7"/><path d="M5.8 13.8L1 11.8L4.8 8z" fill="#2a5ec8"/><path d="M15.2 10.4L10.4 11L12.4 7z" fill="#6a96e0"/></g><g transform="translate(755,134)"><path d="M.5 .5H7.5L11.5 4.5V14.5H.5z" fill="#e4e4f0" stroke="#a8a8c0"/><path d="M7.5 .5V4.5H11.5" fill="none" stroke="#a8a8c0"/><path d="M3.5 7L8.5 12.5M8.5 7L3.5 12.5" stroke="#a8a8c0" stroke-width="1.3"/></g><g transform="translate(776,137)"><rect x="0" y="0" width="1.6" height="8.5" fill="#9a9a9a"/><path d="M7 0V8.5L2 4.25z" fill="#9a9a9a"/></g><g transform="translate(795,137)"><path d="M6 0V8.5L0 4.25z" fill="#9a9a9a"/></g><g transform="translate(923.5,136)"><path d="M0 0V10L6 5z" fill="#1e3f9a"/></g><g transform="translate(940.5,136)"><path d="M0 0V10L5 5z" fill="#1e3f9a"/><rect x="5.3" y="0" width="1.7" height="10" fill="#1e3f9a"/></g></svg>
<div class="a" style="left:13px;top:154px;width:3px;height:974px;background:#f6f6f6;"></div>
<div class="a" style="left:16px;top:154px;width:1px;height:974px;background:#a0a0a0;"></div>
<div class="a" style="left:17px;top:154px;width:3px;height:974px;background:#f4f4f4;"></div>
<div class="a" style="left:20px;top:154px;width:1px;height:974px;background:#a0a0a0;"></div>
<div class="a" style="left:21px;top:154px;width:56px;height:974px;background:#f0f0f0;"></div>
<div class="a" style="left:77px;top:160px;width:857px;height:968px;background:#a0a0a0;box-shadow:inset 1px 1px 0 #696969;"></div>
<div class="a" style="left:77px;top:154px;width:874px;height:6px;background:#f0f0f0;"></div>
<div class="a" style="left:934px;top:154px;width:17px;height:974px;background:#f0f0f0;"></div>
<div class="a" style="left:77px;top:159px;width:874px;height:1px;background:#b4b4b4;"></div>
<div class="a" style="left:95px;top:166px;width:818px;height:962px;background:#fff;border:1px solid #000;border-bottom:none;box-sizing:border-box;"></div>
<div class="a" style="left:913px;top:169px;width:3px;height:959px;background:#000;"></div>
<div class="a" style="left:934px;top:160px;width:17px;height:968px;background:linear-gradient(90deg,#fcfcfc 0,#f0f0f0 2px,#eeeeee 100%);"></div>
<div class="a" style="left:935px;top:179px;width:15px;height:840px;border:1px solid #979797;border-radius:2px;box-sizing:border-box;background:linear-gradient(90deg,#fafafa 0,#ececec 45%,#d8d8da 50%,#c2c2c6 88%,#d0d0d0 100%);"></div>
<svg class="a" style="left:934px;top:160px;" width="17" height="968" viewBox="0 0 17 968"><path d="M5.5 11.8 L9.3 8 L13 11.8Z" fill="#303030"/><path d="M5.5 957.5 h7 l-3.5 3.8z" fill="#404040"/><path d="M5 436.5h7M5 438.5h7M5 440.5h7" stroke="#6b7480" stroke-width="1"/><path d="M5 437.5h7M5 439.5h7M5 441.5h7" stroke="#fff" stroke-width="1"/></svg>
<div class="a" style="left:22px;top:183px;width:52px;height:1px;background:#a0a0a0;"></div>
<span class="t" style="left:33.69px;top:186px;font-size:11.41px;line-height:12px;letter-spacing:-0.337px;">PH</span>
<div class="a" style="left:22px;top:1080px;width:52px;height:1px;background:#a0a0a0;"></div>
<span class="t" style="left:33.71px;top:1082px;font-size:11.18px;line-height:12px;letter-spacing:-0.274px;">PF</span>
<div class="a" style="left:120px;top:183px;width:767px;height:17px;background:linear-gradient(180deg,#a6cdfc 0,#cde2fd 24%,#ebf3fe 50%,#fafcff 73%,#fff 92%);"></div>
<span class="t" style="left:120.19px;top:215px;font-size:15.28px;line-height:17px;color:#0000ff;font-weight:bold;letter-spacing:0.278px;">Crystal Migration Services - the # 1 to</span>
<span class="t" style="left:410.16px;top:215px;font-size:15.28px;line-height:17px;color:#0000ff;font-style:italic;letter-spacing:0.336px;">Convert Crystal Reports to SSRS</span>
<div class="a" style="left:686px;top:213px;width:84px;height:20px;border:1px solid #b0b0b0;box-sizing:border-box;"></div>
<span class="t" style="left:688.05px;top:215px;font-size:12.73px;line-height:15px;letter-spacing:0.316px;">04-Oct-2013</span>
<span class="t" style="left:809.97px;top:215px;font-size:12.73px;line-height:15px;font-weight:bold;letter-spacing:0.26px;">Page 1 of 4</span>
<span class="t" style="left:120.06px;top:240px;font-size:11.46px;line-height:12px;color:#008b8b;font-weight:bold;letter-spacing:0.289px;">Features: Record Selection Formula, Grouping, Sorting, Running Total, Highlighting, Hyperlink, Percentage Summary...</span>
<span class="t" style="left:119.79px;top:271px;font-size:12.73px;line-height:15px;font-weight:bold;letter-spacing:0.207px;">Country</span>
<span class="t" style="left:239.47px;top:271px;font-size:12.73px;line-height:15px;font-weight:bold;letter-spacing:0.485px;">Region</span>
<span class="t" style="left:367.79px;top:271px;font-size:12.73px;line-height:15px;font-weight:bold;letter-spacing:0.394px;">Customer Name</span>
<span class="t" style="left:546.67px;top:271px;font-size:12.73px;line-height:15px;font-weight:bold;letter-spacing:0.265px;">Last Year's Sales</span>
<span class="t" style="left:692.17px;top:271px;font-size:12.73px;line-height:15px;font-weight:bold;letter-spacing:0.406px;">Pecentage</span>
<span class="t" style="left:784.67px;top:271px;font-size:12.73px;line-height:15px;font-weight:bold;letter-spacing:0.379px;">Running Total</span>
<div class="a" style="left:120px;top:296px;width:766px;height:2px;background:#e36c0a;"></div>
<span class="t" style="left:119.9px;top:304px;font-size:12.73px;line-height:15px;color:#000080;font-weight:bold;letter-spacing:0.382px;">Belgium</span>
<span class="t" style="left:368.7px;top:304px;font-size:12.73px;line-height:15px;font-weight:bold;letter-spacing:0.233px;">Summary of Belgium</span>
<span class="t" style="left:582.41px;top:304px;font-size:12.73px;line-height:15px;font-weight:bold;letter-spacing:0.184px;">$200,000.00</span>
<div class="a" style="left:120px;top:319px;width:768px;height:18px;background:#e8f2fd;"></div>
<span class="t" style="left:239.9px;top:319px;font-size:12.73px;line-height:15px;letter-spacing:0.319px;">Brussels</span>
<span class="t" style="left:367.9px;top:319px;font-size:12.73px;line-height:15px;letter-spacing:0.3px;">Belgium Bike Co.</span>
<span class="t" style="left:582.02px;top:319px;font-size:12.73px;line-height:15px;color:#ff00ff;letter-spacing:0.243px;">$200,000.00</span>
<span class="t" style="left:707.71px;top:319px;font-size:12.73px;line-height:15px;letter-spacing:-0.043px;">100.00%</span>
<span class="t" style="left:799.56px;top:319px;font-size:12.73px;line-height:15px;letter-spacing:0.169px;">$200,000.00</span>
<span class="t" style="left:119.9px;top:352px;font-size:12.73px;line-height:15px;color:#000080;font-weight:bold;letter-spacing:0.43px;">Canada</span>
<span class="t" style="left:368.7px;top:352px;font-size:12.73px;line-height:15px;font-weight:bold;letter-spacing:0.241px;">Summary of Canada</span>
<span class="t" style="left:582.48px;top:352px;font-size:12.73px;line-height:15px;font-weight:bold;letter-spacing:0.184px;">$166,031.37</span>
<span class="t" style="left:239.9px;top:367px;font-size:12.73px;line-height:15px;letter-spacing:0.762px;">BC</span>
<span class="t" style="left:367.9px;top:367px;font-size:12.73px;line-height:15px;letter-spacing:0.285px;">Pedal Pusher Bikes Inc.</span>
<span class="t" style="left:589.4px;top:367px;font-size:12.73px;line-height:15px;color:#ff00ff;letter-spacing:0.242px;">$39,277.38</span>
<span class="t" style="left:714.74px;top:367px;font-size:12.73px;line-height:15px;letter-spacing:-0.044px;">23.66%</span>
<span class="t" style="left:806.86px;top:367px;font-size:12.73px;line-height:15px;letter-spacing:0.169px;">$39,277.38</span>
<div class="a" style="left:120px;top:384px;width:768px;height:17px;background:#e8f2fd;"></div>
<span class="t" style="left:239.9px;top:384px;font-size:12.73px;line-height:15px;letter-spacing:0.762px;">BC</span>
<span class="t" style="left:367.9px;top:384px;font-size:12.73px;line-height:15px;letter-spacing:0.335px;">Crazy Wheels</span>
<span class="t" style="left:589.4px;top:384px;font-size:12.73px;line-height:15px;color:#ff00ff;letter-spacing:0.242px;">$38,280.53</span>
<span class="t" style="left:714.74px;top:384px;font-size:12.73px;line-height:15px;letter-spacing:-0.044px;">23.06%</span>
<span class="t" style="left:806.93px;top:384px;font-size:12.73px;line-height:15px;letter-spacing:0.169px;">$77,557.91</span>
<span class="t" style="left:239.9px;top:401px;font-size:12.73px;line-height:15px;letter-spacing:0.762px;">BC</span>
<span class="t" style="left:367.9px;top:401px;font-size:12.73px;line-height:15px;letter-spacing:0.301px;">Cycles and Sports</span>
<span class="t" style="left:589.33px;top:401px;font-size:12.73px;line-height:15px;color:#ff00ff;letter-spacing:0.242px;">$38,199.10</span>
<span class="t" style="left:714.74px;top:401px;font-size:12.73px;line-height:15px;letter-spacing:-0.044px;">23.01%</span>
<span class="t" style="left:800.67px;top:401px;font-size:12.73px;line-height:15px;letter-spacing:0.167px;">$115,757.01</span>
<div class="a" style="left:120px;top:419px;width:768px;height:17px;background:#e8f2fd;"></div>
<span class="t" style="left:239.9px;top:419px;font-size:12.73px;line-height:15px;letter-spacing:0.762px;">BC</span>
<span class="t" style="left:367.9px;top:419px;font-size:12.73px;line-height:15px;letter-spacing:0.25px;">Biking's It Industries</span>
<span class="t" style="left:589.47px;top:419px;font-size:12.73px;line-height:15px;color:#ff00ff;letter-spacing:0.242px;">$30,348.92</span>
<span class="t" style="left:714.74px;top:419px;font-size:12.73px;line-height:15px;letter-spacing:-0.044px;">18.28%</span>
<span class="t" style="left:799.62px;top:419px;font-size:12.73px;line-height:15px;letter-spacing:0.169px;">$146,105.93</span>
<span class="t" style="left:239.9px;top:436px;font-size:12.73px;line-height:15px;letter-spacing:0.762px;">BC</span>
<span class="t" style="left:367.9px;top:436px;font-size:12.73px;line-height:15px;letter-spacing:0.285px;">Bikes for Tykes</span>
<span class="t" style="left:596.65px;top:436px;font-size:12.73px;line-height:15px;letter-spacing:0.242px;">$1,800.00</span>
<span class="t" style="left:721.83px;top:436px;font-size:12.73px;line-height:15px;letter-spacing:-0.045px;">1.08%</span>
<span class="t" style="left:799.62px;top:436px;font-size:12.73px;line-height:15px;letter-spacing:0.169px;">$147,905.93</span>
<div class="a" style="left:120px;top:453px;width:768px;height:18px;background:#e8f2fd;"></div>
<span class="t" style="left:239.9px;top:453px;font-size:12.73px;line-height:15px;letter-spacing:0.822px;">MB</span>
<span class="t" style="left:367.9px;top:453px;font-size:12.73px;line-height:15px;letter-spacing:0.3px;">Dag City Cycle</span>
<span class="t" style="left:596.51px;top:453px;font-size:12.73px;line-height:15px;letter-spacing:0.243px;">$1,276.74</span>
<span class="t" style="left:721.83px;top:453px;font-size:12.73px;line-height:15px;letter-spacing:-0.046px;">0.77%</span>
<span class="t" style="left:799.69px;top:453px;font-size:12.73px;line-height:15px;letter-spacing:0.169px;">$149,182.67</span>
<span class="t" style="left:239.9px;top:471px;font-size:12.73px;line-height:15px;letter-spacing:0.759px;">NS</span>
<span class="t" style="left:367.9px;top:471px;font-size:12.73px;line-height:15px;letter-spacing:0.284px;">Halifax Cycle Centre</span>
<span class="t" style="left:596.71px;top:471px;font-size:12.73px;line-height:15px;letter-spacing:0.242px;">$1,489.05</span>
<span class="t" style="left:721.83px;top:471px;font-size:12.73px;line-height:15px;letter-spacing:-0.046px;">0.90%</span>
<span class="t" style="left:799.69px;top:471px;font-size:12.73px;line-height:15px;letter-spacing:0.169px;">$150,671.72</span>
<div class="a" style="left:120px;top:488px;width:768px;height:17px;background:#e8f2fd;"></div>
<span class="t" style="left:239.9px;top:488px;font-size:12.73px;line-height:15px;letter-spacing:0.828px;">ON</span>
<span class="t" style="left:367.9px;top:488px;font-size:12.73px;line-height:15px;letter-spacing:0.316px;">Cycle Fever</span>
<span class="t" style="left:596.65px;top:488px;font-size:12.73px;line-height:15px;letter-spacing:0.242px;">$6,629.10</span>
<span class="t" style="left:721.83px;top:488px;font-size:12.73px;line-height:15px;letter-spacing:-0.046px;">3.99%</span>
<span class="t" style="left:799.69px;top:488px;font-size:12.73px;line-height:15px;letter-spacing:0.169px;">$157,300.82</span>
<span class="t" style="left:239.9px;top:505px;font-size:12.73px;line-height:15px;letter-spacing:0.828px;">ON</span>
<span class="t" style="left:367.9px;top:505px;font-size:12.73px;line-height:15px;letter-spacing:0.311px;">Don't Tread On Me</span>
<span class="t" style="left:596.65px;top:505px;font-size:12.73px;line-height:15px;letter-spacing:0.242px;">$5,879.70</span>
<span class="t" style="left:721.83px;top:505px;font-size:12.73px;line-height:15px;letter-spacing:-0.046px;">3.54%</span>
<span class="t" style="left:799.69px;top:505px;font-size:12.73px;line-height:15px;letter-spacing:0.169px;">$163,180.52</span>
<div class="a" style="left:120px;top:523px;width:768px;height:17px;background:#e8f2fd;"></div>
<span class="t" style="left:239.9px;top:523px;font-size:12.73px;line-height:15px;letter-spacing:0.789px;">PQ</span>
<span class="t" style="left:367.9px;top:523px;font-size:12.73px;line-height:15px;letter-spacing:0.294px;">Wheels 'n' Deals</span>
<span class="t" style="left:596.71px;top:523px;font-size:12.73px;line-height:15px;letter-spacing:0.242px;">$2,850.85</span>
<span class="t" style="left:721.83px;top:523px;font-size:12.73px;line-height:15px;letter-spacing:-0.045px;">1.72%</span>
<span class="t" style="left:799.69px;top:523px;font-size:12.73px;line-height:15px;letter-spacing:0.169px;">$166,031.37</span>
<span class="t" style="left:119.9px;top:555px;font-size:12.73px;line-height:15px;color:#000080;font-weight:bold;letter-spacing:0.381px;">England</span>
<span class="t" style="left:368.7px;top:555px;font-size:12.73px;line-height:15px;font-weight:bold;letter-spacing:0.233px;">Summary of England</span>
<span class="t" style="left:582.48px;top:555px;font-size:12.73px;line-height:15px;font-weight:bold;letter-spacing:0.184px;">$578,229.17</span>
<span class="t" style="left:239.9px;top:570px;font-size:12.73px;line-height:15px;letter-spacing:0.44px;">Avon</span>
<span class="t" style="left:367.9px;top:570px;font-size:12.73px;line-height:15px;letter-spacing:0.302px;">McDonald Klein Sports</span>
<span class="t" style="left:596.65px;top:570px;font-size:12.73px;line-height:15px;letter-spacing:0.242px;">$3,618.00</span>
<span class="t" style="left:721.83px;top:570px;font-size:12.73px;line-height:15px;letter-spacing:-0.046px;">0.63%</span>
<span class="t" style="left:814.03px;top:570px;font-size:12.73px;line-height:15px;letter-spacing:0.169px;">$3,618.00</span>
<div class="a" style="left:120px;top:587px;width:768px;height:18px;background:#e8f2fd;"></div>
<span class="t" style="left:239.9px;top:587px;font-size:12.73px;line-height:15px;letter-spacing:0.308px;">Berkshire</span>
<span class="t" style="left:367.9px;top:587px;font-size:12.73px;line-height:15px;letter-spacing:0.283px;">Life Cycle Centre</span>
<span class="t" style="left:596.71px;top:587px;font-size:12.73px;line-height:15px;letter-spacing:0.242px;">$8,819.55</span>
<span class="t" style="left:721.83px;top:587px;font-size:12.73px;line-height:15px;letter-spacing:-0.045px;">1.53%</span>
<span class="t" style="left:806.86px;top:587px;font-size:12.73px;line-height:15px;letter-spacing:0.169px;">$12,437.55</span>
<span class="t" style="left:239.9px;top:605px;font-size:12.73px;line-height:15px;letter-spacing:0.322px;">Cambridgeshire</span>
<span class="t" style="left:367.9px;top:605px;font-size:12.73px;line-height:15px;letter-spacing:0.253px;">Hit the Dirt</span>
<span class="t" style="left:596.65px;top:605px;font-size:12.73px;line-height:15px;letter-spacing:0.242px;">$4,637.00</span>
<span class="t" style="left:721.83px;top:605px;font-size:12.73px;line-height:15px;letter-spacing:-0.046px;">0.80%</span>
<span class="t" style="left:806.86px;top:605px;font-size:12.73px;line-height:15px;letter-spacing:0.169px;">$17,074.55</span>
<div class="a" style="left:120px;top:622px;width:768px;height:17px;background:#e8f2fd;"></div>
<span class="t" style="left:239.9px;top:622px;font-size:12.73px;line-height:15px;letter-spacing:0.375px;">Co Durham</span>
<span class="t" style="left:367.9px;top:622px;font-size:12.73px;line-height:15px;letter-spacing:0.309px;">Donview Bike Co.</span>
<span class="t" style="left:614.96px;top:622px;font-size:12.73px;line-height:15px;letter-spacing:0.265px;">$35.00</span>
<span class="t" style="left:721.83px;top:622px;font-size:12.73px;line-height:15px;letter-spacing:-0.046px;">0.01%</span>
<span class="t" style="left:806.86px;top:622px;font-size:12.73px;line-height:15px;letter-spacing:0.169px;">$17,109.55</span>
<span class="t" style="left:239.9px;top:639px;font-size:12.73px;line-height:15px;letter-spacing:0.412px;">Devon</span>
<span class="t" style="left:367.9px;top:639px;font-size:12.73px;line-height:15px;letter-spacing:0.3px;">Exeter Cycle Source</span>
<span class="t" style="left:596.71px;top:639px;font-size:12.73px;line-height:15px;letter-spacing:0.242px;">$1,030.08</span>
<span class="t" style="left:721.83px;top:639px;font-size:12.73px;line-height:15px;letter-spacing:-0.046px;">0.18%</span>
<span class="t" style="left:806.86px;top:639px;font-size:12.73px;line-height:15px;letter-spacing:0.169px;">$18,139.63</span>
<div class="a" style="left:120px;top:657px;width:768px;height:17px;background:#e8f2fd;"></div>
<span class="t" style="left:239.9px;top:657px;font-size:12.73px;line-height:15px;letter-spacing:0.344px;">Dorset</span>
<span class="t" style="left:367.9px;top:657px;font-size:12.73px;line-height:15px;letter-spacing:0.321px;">Source One Cycle</span>
<span class="t" style="left:597.63px;top:657px;font-size:12.73px;line-height:15px;letter-spacing:0.238px;">$1,119.50</span>
<span class="t" style="left:721.83px;top:657px;font-size:12.73px;line-height:15px;letter-spacing:-0.046px;">0.19%</span>
<span class="t" style="left:806.86px;top:657px;font-size:12.73px;line-height:15px;letter-spacing:0.169px;">$19,259.13</span>
<span class="t" style="left:239.9px;top:674px;font-size:12.73px;line-height:15px;letter-spacing:0.318px;">Greater London</span>
<span class="t" style="left:367.9px;top:674px;font-size:12.73px;line-height:15px;letter-spacing:0.364px;">BBS Pty</span>
<span class="t" style="left:582.02px;top:674px;font-size:12.73px;line-height:15px;color:#ff00ff;letter-spacing:0.243px;">$500,000.00</span>
<span class="t" style="left:714.74px;top:674px;font-size:12.73px;line-height:15px;letter-spacing:-0.044px;">86.47%</span>
<span class="t" style="left:799.62px;top:674px;font-size:12.73px;line-height:15px;letter-spacing:0.169px;">$519,259.13</span>
<div class="a" style="left:120px;top:691px;width:768px;height:18px;background:#e8f2fd;"></div>
<span class="t" style="left:239.9px;top:691px;font-size:12.73px;line-height:15px;letter-spacing:0.318px;">Greater London</span>
<span class="t" style="left:367.9px;top:691px;font-size:12.73px;line-height:15px;letter-spacing:0.271px;">Picadilly Cycle</span>
<span class="t" style="left:596.71px;top:691px;font-size:12.73px;line-height:15px;letter-spacing:0.242px;">$5,321.25</span>
<span class="t" style="left:721.83px;top:691px;font-size:12.73px;line-height:15px;letter-spacing:-0.046px;">0.92%</span>
<span class="t" style="left:799.62px;top:691px;font-size:12.73px;line-height:15px;letter-spacing:0.169px;">$524,580.38</span>
<span class="t" style="left:239.9px;top:709px;font-size:12.73px;line-height:15px;letter-spacing:0.312px;">Greater Manchester</span>
<span class="t" style="left:367.9px;top:709px;font-size:12.73px;line-height:15px;letter-spacing:0.314px;">Great Outdoors</span>
<span class="t" style="left:596.71px;top:709px;font-size:12.73px;line-height:15px;letter-spacing:0.242px;">$3,024.85</span>
<span class="t" style="left:721.83px;top:709px;font-size:12.73px;line-height:15px;letter-spacing:-0.046px;">0.52%</span>
<span class="t" style="left:799.62px;top:709px;font-size:12.73px;line-height:15px;letter-spacing:0.169px;">$527,605.23</span>
<div class="a" style="left:120px;top:726px;width:768px;height:17px;background:#e8f2fd;"></div>
<span class="t" style="left:239.9px;top:726px;font-size:12.73px;line-height:15px;letter-spacing:0.354px;">Hampshire</span>
<span class="t" style="left:367.9px;top:726px;font-size:12.73px;line-height:15px;letter-spacing:0.323px;">Wheel to Wheel</span>
<span class="t" style="left:596.65px;top:726px;font-size:12.73px;line-height:15px;letter-spacing:0.242px;">$5,912.70</span>
<span class="t" style="left:721.83px;top:726px;font-size:12.73px;line-height:15px;letter-spacing:-0.045px;">1.02%</span>
<span class="t" style="left:799.62px;top:726px;font-size:12.73px;line-height:15px;letter-spacing:0.169px;">$533,517.93</span>
<span class="t" style="left:239.9px;top:743px;font-size:12.73px;line-height:15px;letter-spacing:0.395px;">Kent</span>
<span class="t" style="left:367.9px;top:743px;font-size:12.73px;line-height:15px;letter-spacing:0.304px;">Sunrise Cycle</span>
<span class="t" style="left:596.71px;top:743px;font-size:12.73px;line-height:15px;letter-spacing:0.242px;">$1,690.05</span>
<span class="t" style="left:721.83px;top:743px;font-size:12.73px;line-height:15px;letter-spacing:-0.046px;">0.29%</span>
<span class="t" style="left:799.62px;top:743px;font-size:12.73px;line-height:15px;letter-spacing:0.169px;">$535,207.98</span>
<div class="a" style="left:120px;top:761px;width:768px;height:17px;background:#e8f2fd;"></div>
<span class="t" style="left:239.9px;top:761px;font-size:12.73px;line-height:15px;letter-spacing:0.307px;">Nottinghamshire</span>
<span class="t" style="left:367.9px;top:761px;font-size:12.73px;line-height:15px;letter-spacing:0.315px;">Tom's Bikes</span>
<span class="t" style="left:589.33px;top:761px;font-size:12.73px;line-height:15px;color:#ff00ff;letter-spacing:0.242px;">$36,330.00</span>
<span class="t" style="left:721.83px;top:761px;font-size:12.73px;line-height:15px;letter-spacing:-0.046px;">6.28%</span>
<span class="t" style="left:799.62px;top:761px;font-size:12.73px;line-height:15px;letter-spacing:0.169px;">$571,537.98</span>
<span class="t" style="left:239.9px;top:778px;font-size:12.73px;line-height:15px;letter-spacing:0.325px;">West Midlands</span>
<span class="t" style="left:367.9px;top:778px;font-size:12.73px;line-height:15px;letter-spacing:0.3px;">Westerly Sports</span>
<span class="t" style="left:614.96px;top:778px;font-size:12.73px;line-height:15px;letter-spacing:0.265px;">$47.00</span>
<span class="t" style="left:721.83px;top:778px;font-size:12.73px;line-height:15px;letter-spacing:-0.046px;">0.01%</span>
<span class="t" style="left:799.62px;top:778px;font-size:12.73px;line-height:15px;letter-spacing:0.169px;">$571,584.98</span>
<div class="a" style="left:120px;top:795px;width:768px;height:18px;background:#e8f2fd;"></div>
<span class="t" style="left:239.9px;top:795px;font-size:12.73px;line-height:15px;letter-spacing:0.305px;">West Yorkshire</span>
<span class="t" style="left:367.9px;top:795px;font-size:12.73px;line-height:15px;letter-spacing:0.299px;">LifeCycle</span>
<span class="t" style="left:596.78px;top:795px;font-size:12.73px;line-height:15px;letter-spacing:0.242px;">$6,644.19</span>
<span class="t" style="left:721.83px;top:795px;font-size:12.73px;line-height:15px;letter-spacing:-0.045px;">1.15%</span>
<span class="t" style="left:799.69px;top:795px;font-size:12.73px;line-height:15px;letter-spacing:0.169px;">$578,229.17</span>
<span class="t" style="left:119.9px;top:828px;font-size:12.73px;line-height:15px;color:#000080;font-weight:bold;letter-spacing:0.382px;">France</span>
<span class="t" style="left:368.7px;top:828px;font-size:12.73px;line-height:15px;font-weight:bold;letter-spacing:0.232px;">Summary of France</span>
<span class="t" style="left:582.41px;top:828px;font-size:12.73px;line-height:15px;font-weight:bold;letter-spacing:0.184px;">$717,529.32</span>
<span class="t" style="left:239.9px;top:843px;font-size:12.73px;line-height:15px;letter-spacing:0.355px;">Alsace</span>
<span class="t" style="left:367.9px;top:843px;font-size:12.73px;line-height:15px;letter-spacing:0.301px;">Sports Alsace</span>
<span class="t" style="left:589.33px;top:843px;font-size:12.73px;line-height:15px;color:#ff00ff;letter-spacing:0.242px;">$52,787.50</span>
<span class="t" style="left:721.83px;top:843px;font-size:12.73px;line-height:15px;letter-spacing:-0.046px;">7.36%</span>
<span class="t" style="left:806.8px;top:843px;font-size:12.73px;line-height:15px;letter-spacing:0.169px;">$52,787.50</span>
<div class="a" style="left:120px;top:860px;width:768px;height:17px;background:#e8f2fd;"></div>
<span class="t" style="left:239.9px;top:860px;font-size:12.73px;line-height:15px;letter-spacing:0.355px;">Alsace</span>
<span class="t" style="left:367.9px;top:860px;font-size:12.73px;line-height:15px;letter-spacing:0.323px;">Mulhouse Vélos</span>
<span class="t" style="left:596.65px;top:860px;font-size:12.73px;line-height:15px;letter-spacing:0.242px;">$5,359.70</span>
<span class="t" style="left:721.83px;top:860px;font-size:12.73px;line-height:15px;letter-spacing:-0.046px;">0.75%</span>
<span class="t" style="left:806.8px;top:860px;font-size:12.73px;line-height:15px;letter-spacing:0.169px;">$58,147.20</span>
<span class="t" style="left:239.9px;top:877px;font-size:12.73px;line-height:15px;letter-spacing:0.31px;">Aquitaine</span>
<span class="t" style="left:367.9px;top:877px;font-size:12.73px;line-height:15px;letter-spacing:0.308px;">Lourdes Sports</span>
<span class="t" style="left:589.2px;top:877px;font-size:12.73px;line-height:15px;color:#ff00ff;letter-spacing:0.243px;">$53,370.14</span>
<span class="t" style="left:721.83px;top:877px;font-size:12.73px;line-height:15px;letter-spacing:-0.046px;">7.44%</span>
<span class="t" style="left:801.38px;top:877px;font-size:12.73px;line-height:15px;letter-spacing:0.165px;">$111,517.34</span>
<div class="a" style="left:120px;top:895px;width:768px;height:17px;background:#e8f2fd;"></div>
<span class="t" style="left:239.9px;top:895px;font-size:12.73px;line-height:15px;letter-spacing:0.31px;">Aquitaine</span>
<span class="t" style="left:367.9px;top:895px;font-size:12.73px;line-height:15px;letter-spacing:0.314px;">Bordeaux Sports</span>
<span class="t" style="left:607.71px;top:895px;font-size:12.73px;line-height:15px;letter-spacing:0.261px;">$533.75</span>
<span class="t" style="left:721.83px;top:895px;font-size:12.73px;line-height:15px;letter-spacing:-0.046px;">0.07%</span>
<span class="t" style="left:800.67px;top:895px;font-size:12.73px;line-height:15px;letter-spacing:0.167px;">$112,051.09</span>
<span class="t" style="left:239.9px;top:912px;font-size:12.73px;line-height:15px;letter-spacing:0.363px;">Auvergne</span>
<span class="t" style="left:367.9px;top:912px;font-size:12.73px;line-height:15px;letter-spacing:0.284px;">Arsenault et Maurier</span>
<span class="t" style="left:589.33px;top:912px;font-size:12.73px;line-height:15px;color:#ff0000;letter-spacing:0.242px;">$12,535.70</span>
<span class="t" style="left:721.83px;top:912px;font-size:12.73px;line-height:15px;letter-spacing:-0.045px;">1.75%</span>
<span class="t" style="left:799.69px;top:912px;font-size:12.73px;line-height:15px;letter-spacing:0.169px;">$124,586.79</span>
<div class="a" style="left:120px;top:929px;width:768px;height:18px;background:#e8f2fd;"></div>
<span class="t" style="left:239.9px;top:929px;font-size:12.73px;line-height:15px;letter-spacing:0.363px;">Auvergne</span>
<span class="t" style="left:367.9px;top:929px;font-size:12.73px;line-height:15px;letter-spacing:0.312px;">Auvergne Bicross</span>
<span class="t" style="left:596.71px;top:929px;font-size:12.73px;line-height:15px;letter-spacing:0.242px;">$5,179.98</span>
<span class="t" style="left:721.83px;top:929px;font-size:12.73px;line-height:15px;letter-spacing:-0.046px;">0.72%</span>
<span class="t" style="left:799.69px;top:929px;font-size:12.73px;line-height:15px;letter-spacing:0.169px;">$129,766.77</span>
<span class="t" style="left:239.9px;top:947px;font-size:12.73px;line-height:15px;letter-spacing:0.335px;">Basse Normandie</span>
<span class="t" style="left:367.9px;top:947px;font-size:12.73px;line-height:15px;letter-spacing:0.308px;">France Sports</span>
<span class="t" style="left:596.65px;top:947px;font-size:12.73px;line-height:15px;letter-spacing:0.242px;">$7,544.40</span>
<span class="t" style="left:721.83px;top:947px;font-size:12.73px;line-height:15px;letter-spacing:-0.045px;">1.05%</span>
<span class="t" style="left:800.67px;top:947px;font-size:12.73px;line-height:15px;letter-spacing:0.167px;">$137,311.17</span>
<div class="a" style="left:120px;top:964px;width:768px;height:17px;background:#e8f2fd;"></div>
<span class="t" style="left:239.9px;top:964px;font-size:12.73px;line-height:15px;letter-spacing:0.335px;">Basse Normandie</span>
<span class="t" style="left:367.9px;top:964px;font-size:12.73px;line-height:15px;letter-spacing:0.321px;">Vélos Basse Normandie</span>
<span class="t" style="left:596.65px;top:964px;font-size:12.73px;line-height:15px;letter-spacing:0.242px;">$1,073.80</span>
<span class="t" style="left:721.83px;top:964px;font-size:12.73px;line-height:15px;letter-spacing:-0.046px;">0.15%</span>
<span class="t" style="left:799.69px;top:964px;font-size:12.73px;line-height:15px;letter-spacing:0.169px;">$138,384.97</span>
<span class="t" style="left:239.9px;top:981px;font-size:12.73px;line-height:15px;letter-spacing:0.358px;">Bourgogne</span>
<span class="t" style="left:367.9px;top:981px;font-size:12.73px;line-height:15px;letter-spacing:0.3px;">Dijon Sud Vélos</span>
<span class="t" style="left:596.71px;top:981px;font-size:12.73px;line-height:15px;letter-spacing:0.242px;">$1,149.15</span>
<span class="t" style="left:721.83px;top:981px;font-size:12.73px;line-height:15px;letter-spacing:-0.046px;">0.16%</span>
<span class="t" style="left:799.69px;top:981px;font-size:12.73px;line-height:15px;letter-spacing:0.169px;">$139,534.12</span>
<div class="a" style="left:120px;top:999px;width:768px;height:17px;background:#e8f2fd;"></div>
<span class="t" style="left:239.9px;top:999px;font-size:12.73px;line-height:15px;letter-spacing:0.349px;">Centre</span>
<span class="t" style="left:367.9px;top:999px;font-size:12.73px;line-height:15px;letter-spacing:0.35px;">BMX Orléans</span>
<span class="t" style="left:596.65px;top:999px;font-size:12.73px;line-height:15px;letter-spacing:0.242px;">$5,438.70</span>
<span class="t" style="left:721.83px;top:999px;font-size:12.73px;line-height:15px;letter-spacing:-0.046px;">0.76%</span>
<span class="t" style="left:799.69px;top:999px;font-size:12.73px;line-height:15px;letter-spacing:0.169px;">$144,972.82</span>
<span class="t" style="left:239.9px;top:1016px;font-size:12.73px;line-height:15px;letter-spacing:0.349px;">Centre</span>
<span class="t" style="left:367.9px;top:1016px;font-size:12.73px;line-height:15px;letter-spacing:0.285px;">Vélos Ferrier</span>
<span class="t" style="left:596.65px;top:1016px;font-size:12.73px;line-height:15px;letter-spacing:0.242px;">$2,229.50</span>
<span class="t" style="left:721.83px;top:1016px;font-size:12.73px;line-height:15px;letter-spacing:-0.046px;">0.31%</span>
<span class="t" style="left:799.69px;top:1016px;font-size:12.73px;line-height:15px;letter-spacing:0.169px;">$147,202.32</span>
<div class="a" style="left:120px;top:1033px;width:768px;height:18px;background:#e8f2fd;"></div>
<span class="t" style="left:239.9px;top:1033px;font-size:12.73px;line-height:15px;letter-spacing:0.349px;">Centre</span>
<span class="t" style="left:367.9px;top:1033px;font-size:12.73px;line-height:15px;letter-spacing:0.289px;">Bicyclette Bourges Nord</span>
<span class="t" style="left:596.71px;top:1033px;font-size:12.73px;line-height:15px;letter-spacing:0.242px;">$2,099.25</span>
<span class="t" style="left:721.83px;top:1033px;font-size:12.73px;line-height:15px;letter-spacing:-0.046px;">0.29%</span>
<span class="t" style="left:799.69px;top:1033px;font-size:12.73px;line-height:15px;letter-spacing:0.169px;">$149,301.57</span>
<span class="t" style="left:239.9px;top:1051px;font-size:12.73px;line-height:15px;letter-spacing:0.356px;">Champagne-Ardenn</span>
<span class="t" style="left:367.9px;top:1051px;font-size:12.73px;line-height:15px;letter-spacing:0.336px;">Orléans VTT</span>
<span class="t" style="left:596.65px;top:1051px;font-size:12.73px;line-height:15px;letter-spacing:0.242px;">$6,655.90</span>
<span class="t" style="left:721.83px;top:1051px;font-size:12.73px;line-height:15px;letter-spacing:-0.046px;">0.93%</span>
<span class="t" style="left:799.69px;top:1051px;font-size:12.73px;line-height:15px;letter-spacing:0.169px;">$155,957.47</span>
<div class="a" style="left:26px;top:304px;width:48px;height:1px;background:#a0a0a0;"></div>
<div class="a" style="left:26px;top:304px;width:1px;height:15px;background:#a0a0a0;"></div>
<span class="t" style="left:33.63px;top:306px;font-size:11.41px;line-height:12px;letter-spacing:-0.334px;">GH1</span>
<div class="a" style="left:30px;top:319px;width:44px;height:1px;background:#a0a0a0;"></div>
<div class="a" style="left:30px;top:319px;width:1px;height:18px;background:#a0a0a0;"></div>
<span class="t" style="left:34.14px;top:320px;font-size:12px;line-height:14px;">D</span>
<div class="a" style="left:30px;top:337px;width:44px;height:1px;background:#a0a0a0;"></div>
<div class="a" style="left:26px;top:337px;width:1px;height:15px;background:#a0a0a0;"></div>
<span class="t" style="left:33.62px;top:340px;font-size:11.53px;line-height:12px;letter-spacing:-0.313px;">GF1</span>
<div class="a" style="left:26px;top:352px;width:48px;height:1px;background:#a0a0a0;"></div>
<div class="a" style="left:26px;top:352px;width:1px;height:15px;background:#a0a0a0;"></div>
<span class="t" style="left:33.63px;top:354px;font-size:11.41px;line-height:12px;letter-spacing:-0.334px;">GH1</span>
<div class="a" style="left:30px;top:367px;width:44px;height:1px;background:#a0a0a0;"></div>
<div class="a" style="left:30px;top:367px;width:1px;height:17px;background:#a0a0a0;"></div>
<span class="t" style="left:34.14px;top:368px;font-size:12px;line-height:14px;">D</span>
<div class="a" style="left:30px;top:384px;width:44px;height:1px;background:#a0a0a0;"></div>
<div class="a" style="left:30px;top:384px;width:1px;height:17px;background:#a0a0a0;"></div>
<span class="t" style="left:34.14px;top:385px;font-size:12px;line-height:14px;">D</span>
<div class="a" style="left:30px;top:401px;width:44px;height:1px;background:#a0a0a0;"></div>
<div class="a" style="left:30px;top:401px;width:1px;height:18px;background:#a0a0a0;"></div>
<span class="t" style="left:34.14px;top:402px;font-size:12px;line-height:14px;">D</span>
<div class="a" style="left:30px;top:419px;width:44px;height:1px;background:#a0a0a0;"></div>
<div class="a" style="left:30px;top:419px;width:1px;height:17px;background:#a0a0a0;"></div>
<span class="t" style="left:34.14px;top:420px;font-size:12px;line-height:14px;">D</span>
<div class="a" style="left:30px;top:436px;width:44px;height:1px;background:#a0a0a0;"></div>
<div class="a" style="left:30px;top:436px;width:1px;height:17px;background:#a0a0a0;"></div>
<span class="t" style="left:34.14px;top:437px;font-size:12px;line-height:14px;">D</span>
<div class="a" style="left:30px;top:453px;width:44px;height:1px;background:#a0a0a0;"></div>
<div class="a" style="left:30px;top:453px;width:1px;height:18px;background:#a0a0a0;"></div>
<span class="t" style="left:34.14px;top:454px;font-size:12px;line-height:14px;">D</span>
<div class="a" style="left:30px;top:471px;width:44px;height:1px;background:#a0a0a0;"></div>
<div class="a" style="left:30px;top:471px;width:1px;height:17px;background:#a0a0a0;"></div>
<span class="t" style="left:34.14px;top:472px;font-size:12px;line-height:14px;">D</span>
<div class="a" style="left:30px;top:488px;width:44px;height:1px;background:#a0a0a0;"></div>
<div class="a" style="left:30px;top:488px;width:1px;height:17px;background:#a0a0a0;"></div>
<span class="t" style="left:34.14px;top:489px;font-size:12px;line-height:14px;">D</span>
<div class="a" style="left:30px;top:505px;width:44px;height:1px;background:#a0a0a0;"></div>
<div class="a" style="left:30px;top:505px;width:1px;height:18px;background:#a0a0a0;"></div>
<span class="t" style="left:34.14px;top:506px;font-size:12px;line-height:14px;">D</span>
<div class="a" style="left:30px;top:523px;width:44px;height:1px;background:#a0a0a0;"></div>
<div class="a" style="left:30px;top:523px;width:1px;height:17px;background:#a0a0a0;"></div>
<span class="t" style="left:34.14px;top:524px;font-size:12px;line-height:14px;">D</span>
<div class="a" style="left:30px;top:540px;width:44px;height:1px;background:#a0a0a0;"></div>
<div class="a" style="left:26px;top:540px;width:1px;height:14px;background:#a0a0a0;"></div>
<span class="t" style="left:33.62px;top:543px;font-size:11.53px;line-height:12px;letter-spacing:-0.313px;">GF1</span>
<div class="a" style="left:26px;top:556px;width:48px;height:1px;background:#a0a0a0;"></div>
<div class="a" style="left:26px;top:556px;width:1px;height:14px;background:#a0a0a0;"></div>
<span class="t" style="left:33.63px;top:558px;font-size:11.41px;line-height:12px;letter-spacing:-0.334px;">GH1</span>
<div class="a" style="left:30px;top:570px;width:44px;height:1px;background:#a0a0a0;"></div>
<div class="a" style="left:30px;top:570px;width:1px;height:17px;background:#a0a0a0;"></div>
<span class="t" style="left:34.14px;top:571px;font-size:12px;line-height:14px;">D</span>
<div class="a" style="left:30px;top:587px;width:44px;height:1px;background:#a0a0a0;"></div>
<div class="a" style="left:30px;top:587px;width:1px;height:18px;background:#a0a0a0;"></div>
<span class="t" style="left:34.14px;top:588px;font-size:12px;line-height:14px;">D</span>
<div class="a" style="left:30px;top:605px;width:44px;height:1px;background:#a0a0a0;"></div>
<div class="a" style="left:30px;top:605px;width:1px;height:17px;background:#a0a0a0;"></div>
<span class="t" style="left:34.14px;top:606px;font-size:12px;line-height:14px;">D</span>
<div class="a" style="left:30px;top:622px;width:44px;height:1px;background:#a0a0a0;"></div>
<div class="a" style="left:30px;top:622px;width:1px;height:17px;background:#a0a0a0;"></div>
<span class="t" style="left:34.14px;top:623px;font-size:12px;line-height:14px;">D</span>
<div class="a" style="left:30px;top:639px;width:44px;height:1px;background:#a0a0a0;"></div>
<div class="a" style="left:30px;top:639px;width:1px;height:18px;background:#a0a0a0;"></div>
<span class="t" style="left:34.14px;top:640px;font-size:12px;line-height:14px;">D</span>
<div class="a" style="left:30px;top:657px;width:44px;height:1px;background:#a0a0a0;"></div>
<div class="a" style="left:30px;top:657px;width:1px;height:17px;background:#a0a0a0;"></div>
<span class="t" style="left:34.14px;top:658px;font-size:12px;line-height:14px;">D</span>
<div class="a" style="left:30px;top:674px;width:44px;height:1px;background:#a0a0a0;"></div>
<div class="a" style="left:30px;top:674px;width:1px;height:17px;background:#a0a0a0;"></div>
<span class="t" style="left:34.14px;top:675px;font-size:12px;line-height:14px;">D</span>
<div class="a" style="left:30px;top:691px;width:44px;height:1px;background:#a0a0a0;"></div>
<div class="a" style="left:30px;top:691px;width:1px;height:18px;background:#a0a0a0;"></div>
<span class="t" style="left:34.14px;top:692px;font-size:12px;line-height:14px;">D</span>
<div class="a" style="left:30px;top:709px;width:44px;height:1px;background:#a0a0a0;"></div>
<div class="a" style="left:30px;top:709px;width:1px;height:17px;background:#a0a0a0;"></div>
<span class="t" style="left:34.14px;top:710px;font-size:12px;line-height:14px;">D</span>
<div class="a" style="left:30px;top:726px;width:44px;height:1px;background:#a0a0a0;"></div>
<div class="a" style="left:30px;top:726px;width:1px;height:17px;background:#a0a0a0;"></div>
<span class="t" style="left:34.14px;top:727px;font-size:12px;line-height:14px;">D</span>
<div class="a" style="left:30px;top:743px;width:44px;height:1px;background:#a0a0a0;"></div>
<div class="a" style="left:30px;top:743px;width:1px;height:18px;background:#a0a0a0;"></div>
<span class="t" style="left:34.14px;top:744px;font-size:12px;line-height:14px;">D</span>
<div class="a" style="left:30px;top:761px;width:44px;height:1px;background:#a0a0a0;"></div>
<div class="a" style="left:30px;top:761px;width:1px;height:17px;background:#a0a0a0;"></div>
<span class="t" style="left:34.14px;top:762px;font-size:12px;line-height:14px;">D</span>
<div class="a" style="left:30px;top:778px;width:44px;height:1px;background:#a0a0a0;"></div>
<div class="a" style="left:30px;top:778px;width:1px;height:17px;background:#a0a0a0;"></div>
<span class="t" style="left:34.14px;top:779px;font-size:12px;line-height:14px;">D</span>
<div class="a" style="left:30px;top:795px;width:44px;height:1px;background:#a0a0a0;"></div>
<div class="a" style="left:30px;top:795px;width:1px;height:18px;background:#a0a0a0;"></div>
<span class="t" style="left:34.14px;top:796px;font-size:12px;line-height:14px;">D</span>
<div class="a" style="left:30px;top:813px;width:44px;height:1px;background:#a0a0a0;"></div>
<div class="a" style="left:26px;top:813px;width:1px;height:15px;background:#a0a0a0;"></div>
<span class="t" style="left:33.62px;top:816px;font-size:11.53px;line-height:12px;letter-spacing:-0.313px;">GF1</span>
<div class="a" style="left:26px;top:828px;width:48px;height:1px;background:#a0a0a0;"></div>
<div class="a" style="left:26px;top:828px;width:1px;height:15px;background:#a0a0a0;"></div>
<span class="t" style="left:33.63px;top:830px;font-size:11.41px;line-height:12px;letter-spacing:-0.334px;">GH1</span>
<div class="a" style="left:30px;top:843px;width:44px;height:1px;background:#a0a0a0;"></div>
<div class="a" style="left:30px;top:843px;width:1px;height:17px;background:#a0a0a0;"></div>
<span class="t" style="left:34.14px;top:844px;font-size:12px;line-height:14px;">D</span>
<div class="a" style="left:30px;top:860px;width:44px;height:1px;background:#a0a0a0;"></div>
<div class="a" style="left:30px;top:860px;width:1px;height:17px;background:#a0a0a0;"></div>
<span class="t" style="left:34.14px;top:861px;font-size:12px;line-height:14px;">D</span>
<div class="a" style="left:30px;top:877px;width:44px;height:1px;background:#a0a0a0;"></div>
<div class="a" style="left:30px;top:877px;width:1px;height:18px;background:#a0a0a0;"></div>
<span class="t" style="left:34.14px;top:878px;font-size:12px;line-height:14px;">D</span>
<div class="a" style="left:30px;top:895px;width:44px;height:1px;background:#a0a0a0;"></div>
<div class="a" style="left:30px;top:895px;width:1px;height:17px;background:#a0a0a0;"></div>
<span class="t" style="left:34.14px;top:896px;font-size:12px;line-height:14px;">D</span>
<div class="a" style="left:30px;top:912px;width:44px;height:1px;background:#a0a0a0;"></div>
<div class="a" style="left:30px;top:912px;width:1px;height:17px;background:#a0a0a0;"></div>
<span class="t" style="left:34.14px;top:913px;font-size:12px;line-height:14px;">D</span>
<div class="a" style="left:30px;top:929px;width:44px;height:1px;background:#a0a0a0;"></div>
<div class="a" style="left:30px;top:929px;width:1px;height:18px;background:#a0a0a0;"></div>
<span class="t" style="left:34.14px;top:930px;font-size:12px;line-height:14px;">D</span>
<div class="a" style="left:30px;top:947px;width:44px;height:1px;background:#a0a0a0;"></div>
<div class="a" style="left:30px;top:947px;width:1px;height:17px;background:#a0a0a0;"></div>
<span class="t" style="left:34.14px;top:948px;font-size:12px;line-height:14px;">D</span>
<div class="a" style="left:30px;top:964px;width:44px;height:1px;background:#a0a0a0;"></div>
<div class="a" style="left:30px;top:964px;width:1px;height:17px;background:#a0a0a0;"></div>
<span class="t" style="left:34.14px;top:965px;font-size:12px;line-height:14px;">D</span>
<div class="a" style="left:30px;top:981px;width:44px;height:1px;background:#a0a0a0;"></div>
<div class="a" style="left:30px;top:981px;width:1px;height:18px;background:#a0a0a0;"></div>
<span class="t" style="left:34.14px;top:982px;font-size:12px;line-height:14px;">D</span>
<div class="a" style="left:30px;top:999px;width:44px;height:1px;background:#a0a0a0;"></div>
<div class="a" style="left:30px;top:999px;width:1px;height:17px;background:#a0a0a0;"></div>
<span class="t" style="left:34.14px;top:1000px;font-size:12px;line-height:14px;">D</span>
<div class="a" style="left:30px;top:1016px;width:44px;height:1px;background:#a0a0a0;"></div>
<div class="a" style="left:30px;top:1016px;width:1px;height:17px;background:#a0a0a0;"></div>
<span class="t" style="left:34.14px;top:1017px;font-size:12px;line-height:14px;">D</span>
<div class="a" style="left:30px;top:1033px;width:44px;height:1px;background:#a0a0a0;"></div>
<div class="a" style="left:30px;top:1033px;width:1px;height:18px;background:#a0a0a0;"></div>
<span class="t" style="left:34.14px;top:1034px;font-size:12px;line-height:14px;">D</span>
<div class="a" style="left:30px;top:1051px;width:44px;height:1px;background:#a0a0a0;"></div>
<div class="a" style="left:30px;top:1051px;width:1px;height:17px;background:#a0a0a0;"></div>
<span class="t" style="left:34.14px;top:1052px;font-size:12px;line-height:14px;">D</span>
<div class="a" style="left:26px;top:1067px;width:1px;height:13px;background:#a0a0a0;"></div>
<div class="a" style="left:120px;top:1081px;width:762px;height:2px;background:#e36c0a;"></div>
<div class="a" style="left:120px;top:1088px;width:331px;height:40px;background:#f0f0f0;overflow:hidden;"><div class="a" style="left:13.5px;top:21.7px;width:64px;height:34px;border-radius:7px;background:linear-gradient(180deg,#eef7fc 0,#c9e3f3 45%,#9fcbe6 100%);border:3px solid #0b6bb0;box-sizing:border-box;box-shadow:0 0 0 1px #3a5a70, -1px 1px 3px 1px rgba(40,40,40,.55);"></div><svg class="a" style="left:0px;top:0px;" width="331" height="40" viewBox="0 0 331 40"><path d="M79.7 5.2 H93.6 L70.5 43 H56.6 Z" fill="#000"/></svg><span class="t" style="left:84.53px;top:22px;font-size:29.3px;line-height:33px;color:#003a82;font-weight:bold;letter-spacing:-0.113px;-webkit-text-stroke:.5px #003a82;">Crystal Migration</span></div>
<span class="t" style="left:455.84px;top:1090px;font-size:11.46px;line-height:12px;color:#0000ff;font-weight:bold;letter-spacing:0.943px;">Crystal Migration Services Samples</span>
<span class="t" style="left:752.84px;top:1090px;font-size:11.46px;line-height:12px;color:#0000ff;font-weight:bold;letter-spacing:0.984px;">Contact us by Email</span>
<span class="t" style="left:455.77px;top:1112px;font-size:10.5px;line-height:12px;color:#6495ed;letter-spacing:0.705px;">Crystal Migration Services provides leading-edge conversion services that get</span>
<div class="a" style="left:11px;top:1128px;width:941px;height:1px;background:#a9a9a9;"></div>
<div class="a" style="left:8px;top:1129px;width:949px;height:4px;background:#fbfbfb;"></div>
<div class="a" style="left:951px;top:132px;width:1px;height:997px;background:#a9a9a9;"></div>
<div class="a" style="left:952px;top:131px;width:5px;height:1002px;background:#fdfdfd;"></div>
<div class="a" style="left:8px;top:1133px;width:949px;height:21px;background:#f0f0f0;"></div>
<div class="a" style="left:8px;top:1133px;width:949px;height:1px;background:#b9b9b9;"></div>
<span class="t" style="left:11.64px;top:1139px;font-size:12px;line-height:14px;letter-spacing:-0.098px;">For Help, press F1</span>
<div class="a" style="left:498px;top:1136px;width:150px;height:18px;border:1px solid #b4b4b4;border-right-color:#fff;border-bottom-color:#fff;box-sizing:border-box;"></div>
<div class="a" style="left:651px;top:1136px;width:154px;height:18px;border:1px solid #b4b4b4;border-right-color:#fff;border-bottom-color:#fff;box-sizing:border-box;"></div>
<div class="a" style="left:806px;top:1136px;width:123px;height:18px;border:1px solid #b4b4b4;border-right-color:#fff;border-bottom-color:#fff;box-sizing:border-box;"></div>
<div class="a" style="left:931px;top:1136px;width:8px;height:18px;border:1px solid #b4b4b4;border-right-color:#fff;border-bottom-color:#fff;box-sizing:border-box;"></div>
<span class="t" style="left:507.7px;top:1139px;font-size:12px;line-height:14px;letter-spacing:0.475px;">15:54</span>
<span class="t" style="left:809.64px;top:1139px;font-size:12px;line-height:14px;letter-spacing:0.125px;">Records:  161</span>
<svg class="a" style="left:942px;top:1140px;" width="14" height="14" viewBox="0 0 14 14"><path d="M13 3L3 13M13 7L7 13M13 11l-2 2" stroke="#a0a0a0" stroke-width="1"/><path d="M13 4L4 13M13 8L8 13M13 12l-1 1" stroke="#fff" stroke-width="1"/></svg>
<!-- right -->
<div class="a" style="left:965px;top:0px;width:955px;height:1161px;border-radius:8px 0 0 0;background:linear-gradient(180deg,#c3d7f4 0,#c0d5f3 60px,#b1c9f1 400px,#a0bcec 800px,#86a6de 1050px,#6e92d2 1140px,#6e92d2 1161px);"></div>
<div class="a" style="left:965px;top:0px;width:1px;height:1161px;border-radius:8px 0 0 0;background:linear-gradient(180deg,#6f9ae0,#5f88d0);"></div>
<div class="a" style="left:966px;top:1px;width:954px;height:29px;border-radius:7px 0 0 0;background:linear-gradient(180deg,#c3d8f5 0,#e4eefb 3px,#dce9fa 9px,#d2e2f8 13px,#cadcf6 14px,#d6e5f9 22px,#e0ecfb 28px,#9dbce8 29px);"></div>
<div class="a" style="left:965px;top:0px;width:955px;height:1px;border-radius:8px 0 0 0;background:#5d86d0;"></div>
<div class="a" style="left:966px;top:29px;width:954px;height:1px;background:#8fb2e6;"></div>
<div class="a" style="left:966px;top:30px;width:954px;height:26px;background:#bfd6f5;"></div>
<svg class="a" style="left:1000px;top:3px;" width="120" height="26" viewBox="0 0 120 26"><path d="M2.5 2.5 C 12 3, 14 8, 15.5 15 C 17 22, 18 24.5, 24 24.5 H104 A11 11 0 0 0 104 2.5 Z" fill="rgba(222,234,250,.9)" stroke="#8fb0e0" stroke-width="1"/></svg>
<svg class="a" style="left:0;top:0;pointer-events:none" width="1920" height="1200" viewBox="0 0 1920 1200"><g transform="translate(1031,11)"><path d="M.5 .5H12.5V12.5H1.5L.5 11.5z" fill="#6459bd" stroke="#4a3fa0" stroke-width=".8"/><rect x="2.5" y=".8" width="8" height="6.2" fill="#e4e4ea"/><rect x="2.5" y=".8" width="8" height="2.2" fill="#cfcfd8"/><rect x="3" y="8.6" width="7" height="3.9" fill="#e6e6ee"/><rect x="4" y="9.4" width="1.6" height="2.6" fill="#6459bd"/><rect x="7.3" y="9.4" width="1.6" height="2.6" fill="#b8b8c8"/></g><g transform="translate(1055,10)"><path d="M3.5 5.5C6 2.5 10.5 3.5 10.5 7.5C10.5 10 9.5 12 8 13" fill="none" stroke="#aeb2bc" stroke-width="2.8" stroke-linecap="round"/><path d="M.3 2.6L1.2 9.3L7 6.6z" fill="#aeb2bc"/></g><g transform="translate(1077,10)"><path d="M9 5.5C6.5 2.5 2 3.5 2 7.5C2 10 3 12 4.5 13" fill="none" stroke="#aeb2bc" stroke-width="2.8" stroke-linecap="round"/><path d="M12.2 2.6L11.3 9.3L5.5 6.6z" fill="#aeb2bc"/></g></svg>
<div class="a" style="left:974.3px;top:5.8px;width:36.4px;height:36.4px;border-radius:50%;box-shadow:0 1px 3px 1px rgba(60,80,120,.45);"></div>
<svg class="a" style="left:0;top:0;pointer-events:none" width="1920" height="1200" viewBox="0 0 1920 1200"><g transform="translate(974.3,5.8)"><defs><linearGradient id="ob" x1="0" y1="0" x2="0" y2="1"><stop offset="0" stop-color="#f4f6fa"/><stop offset=".48" stop-color="#e2e7ef"/><stop offset=".5" stop-color="#c3cddd"/><stop offset=".8" stop-color="#dfe5ee"/><stop offset="1" stop-color="#fbfcfe"/></linearGradient></defs><circle cx="18.2" cy="18.2" r="17.4" fill="url(#ob)" stroke="#8f99ab" stroke-width="1"/><path d="M11 6.5C17 6.5 26 9.5 32 14.5C28.5 15 26.5 16.5 25 19C21.5 16.5 17.5 17.5 9.5 23C14 17 15 12 11 6.5z" fill="#e3141c"/><path d="M13.5 8.5C17 11 21.5 14.5 25 19M16.5 7.5C20.5 10 25.5 13 29 15M20.5 8.5C24 10.5 28 12.5 31 14.3M14.5 13.5C18.5 12.5 23 12 29.5 13.5M13.5 17.5C17.5 15 21.5 14 27 15.5M11.5 21C15.5 18 20 16.5 25.5 17.5" fill="none" stroke="#fff" stroke-width=".75" opacity=".85"/><path d="M9.5 23C7.5 27 9 30 13 32.5C17.5 35 22 34 23.5 31.5" fill="none" stroke="#8a93a5" stroke-width="1.2"/><path d="M10 25C13 25.5 17 28 19.5 31.5M12.5 23.5C16 24.5 20 27.5 22.5 31.5M16 21.5C19 23 22 26 23.5 30M9.5 28C13 28 16 30 18 33" fill="none" stroke="#b5bcc9" stroke-width=".8"/><path d="M17 19.5C19 22 21.5 25.5 23.5 30.5" fill="none" stroke="#fff" stroke-width="1.2" opacity=".8"/><circle cx="24" cy="31.3" r="1.1" fill="#222"/></g></svg>
<span class="t" style="left:1326.15px;top:9px;font-size:11.88px;line-height:14px;color:#15428b;letter-spacing:-0.318px;">Record Sorting new3.rdl - Microsoft SQL Server Report Builder</span>
<svg class="a" style="left:1840px;top:5px;" width="70" height="20" viewBox="0 0 70 20"><rect x="8" y="14" width="7" height="2" fill="#4b5f82"/><rect x="8" y="16" width="7" height="1" fill="#fff" opacity=".7"/><rect x="32.5" y="8.5" width="8" height="6" fill="none" stroke="#4b5f82"/><rect x="32" y="8" width="9" height="2.2" fill="#4b5f82"/><rect x="32" y="15" width="9" height="1" fill="#fff" opacity=".7"/><path d="M55.5 8.5l7 7M62.5 8.5l-7 7" stroke="#4b5f82" stroke-width="2" fill="none"/></svg>
<svg class="a" style="left:1016px;top:30px;" width="60" height="27" viewBox="0 0 60 27"><defs><linearGradient id="rt" x1="0" y1="0" x2="0" y2="1"><stop offset="0" stop-color="#f2f7fd"/><stop offset=".5" stop-color="#e6effb"/><stop offset="1" stop-color="#dde9f9"/></linearGradient></defs><path d="M0 25.5 H2 Q4.5 25.5 4.5 23 V7 Q4.5 3.5 8 3.5 H50 Q53.5 3.5 53.5 7 V23 Q53.5 25.5 56 25.5 H60 V27 H0Z" fill="url(#rt)"/><path d="M0 25.5 H2 Q4.5 25.5 4.5 23 V7 Q4.5 3.5 8 3.5 H50 Q53.5 3.5 53.5 7 V23 Q53.5 25.5 56 25.5 H60" fill="none" stroke="#8db2e3"/></svg>
<span class="t" style="left:1034.21px;top:39px;font-size:11.07px;line-height:12px;color:#15428b;letter-spacing:-0.284px;">Run</span>
<div class="a" style="left:1896.5px;top:37.5px;width:13px;height:13px;border-radius:50%;background:radial-gradient(circle at 50% 30%,#6ea2f0 0,#2a62d6 55%,#1747b8 100%);box-shadow:0 0 0 1px #dfe9f8, 0 0 0 1.6px #8aa6d8;"></div>
<span class="t" style="left:1899.55px;top:39px;font-size:11.5px;line-height:12px;color:#fff;font-weight:bold;">?</span>
<div class="a" style="left:972px;top:55px;width:943px;height:92px;border:1px solid #8db2e3;border-radius:4px;box-sizing:border-box;background:linear-gradient(180deg,#dfeafb 0,#d6e4f8 25%,#cfdff6 100%);"></div>
<div class="a" style="left:1021px;top:55px;width:49px;height:2px;background:#dde9f9;"></div>
<div class="a" style="left:974px;top:58px;width:52px;height:87px;border:1px solid #a3bfe6;border-radius:3px;box-sizing:border-box;background:linear-gradient(180deg,#e1ecfb 0,#d9e6f9 20%,#d0e0f7 83.5%,#c1d6f4 84.5%,#c3d8f5 100%);box-shadow:1px 1px 0 rgba(255,255,255,.75), inset 1px 1px 0 rgba(255,255,255,.55);"></div><span class="t" style="left:985.6px;top:132px;font-size:11.41px;line-height:12px;color:#15428b;letter-spacing:-0.286px;">Views</span>
<div class="a" style="left:1028px;top:58px;width:46px;height:87px;border:1px solid #a3bfe6;border-radius:3px;box-sizing:border-box;background:linear-gradient(180deg,#e1ecfb 0,#d9e6f9 20%,#d0e0f7 83.5%,#c1d6f4 84.5%,#c3d8f5 100%);box-shadow:1px 1px 0 rgba(255,255,255,.75), inset 1px 1px 0 rgba(255,255,255,.55);"></div><span class="t" style="left:1036.75px;top:131px;font-size:11.64px;line-height:13px;color:#15428b;letter-spacing:-0.334px;">Zoom</span>
<div class="a" style="left:1076px;top:58px;width:365px;height:87px;border:1px solid #a3bfe6;border-radius:3px;box-sizing:border-box;background:linear-gradient(180deg,#e1ecfb 0,#d9e6f9 20%,#d0e0f7 83.5%,#c1d6f4 84.5%,#c3d8f5 100%);box-shadow:1px 1px 0 rgba(255,255,255,.75), inset 1px 1px 0 rgba(255,255,255,.55);"></div><span class="t" style="left:1230.64px;top:131px;font-size:12px;line-height:14px;color:#15428b;letter-spacing:0.02px;">Navigation</span>
<div class="a" style="left:1443px;top:58px;width:135px;height:87px;border:1px solid #a3bfe6;border-radius:3px;box-sizing:border-box;background:linear-gradient(180deg,#e1ecfb 0,#d9e6f9 20%,#d0e0f7 83.5%,#c1d6f4 84.5%,#c3d8f5 100%);box-shadow:1px 1px 0 rgba(255,255,255,.75), inset 1px 1px 0 rgba(255,255,255,.55);"></div><span class="t" style="left:1497.64px;top:131px;font-size:12px;line-height:14px;color:#15428b;letter-spacing:-0.25px;">Print</span>
<div class="a" style="left:1580.5px;top:58px;width:49.5px;height:87px;border:1px solid #a3bfe6;border-radius:3px;box-sizing:border-box;background:linear-gradient(180deg,#e1ecfb 0,#d9e6f9 20%,#d0e0f7 83.5%,#c1d6f4 84.5%,#c3d8f5 100%);box-shadow:1px 1px 0 rgba(255,255,255,.75), inset 1px 1px 0 rgba(255,255,255,.55);"></div><span class="t" style="left:1587.64px;top:131px;font-size:12px;line-height:14px;color:#15428b;letter-spacing:-0.292px;">Export</span>
<div class="a" style="left:1632.5px;top:58px;width:112.5px;height:87px;border:1px solid #a3bfe6;border-radius:3px;box-sizing:border-box;background:linear-gradient(180deg,#e1ecfb 0,#d9e6f9 20%,#d0e0f7 83.5%,#c1d6f4 84.5%,#c3d8f5 100%);box-shadow:1px 1px 0 rgba(255,255,255,.75), inset 1px 1px 0 rgba(255,255,255,.55);"></div><span class="t" style="left:1668.06px;top:131px;font-size:12px;line-height:14px;color:#15428b;letter-spacing:-0.113px;">Options</span>
<div class="a" style="left:1747.5px;top:58px;width:109px;height:87px;border:1px solid #a3bfe6;border-radius:3px;box-sizing:border-box;background:linear-gradient(180deg,#e1ecfb 0,#d9e6f9 20%,#d0e0f7 83.5%,#c1d6f4 84.5%,#c3d8f5 100%);box-shadow:1px 1px 0 rgba(255,255,255,.75), inset 1px 1px 0 rgba(255,255,255,.55);"></div><span class="t" style="left:1790.64px;top:131px;font-size:12px;line-height:14px;color:#15428b;letter-spacing:-0.153px;">Find</span>
<div class="a" style="left:978px;top:60px;width:44px;height:70px;border:1px dotted #000;box-sizing:border-box;"></div>
<span class="t" style="left:981.94px;top:97px;font-size:12px;line-height:14px;color:#15428b;letter-spacing:-0.188px;">Design</span>
<span class="t" style="left:1036.55px;top:97px;font-size:11.64px;line-height:13px;color:#15428b;letter-spacing:-0.334px;">Zoom</span>
<svg class="a" style="left:1047px;top:115px;" width="8" height="6" viewBox="0 0 8 6"><path d="M1 1.5h5.5l-2.75 3z" fill="#5a7fbf"/></svg>
<span class="t" style="left:1086.94px;top:97px;font-size:12px;line-height:14px;color:#8d8d8d;letter-spacing:-0.105px;">First</span>
<span class="t" style="left:1124.66px;top:97px;font-size:11.76px;line-height:13px;color:#8d8d8d;letter-spacing:-0.314px;">Previous</span>
<div class="a" style="left:1173.5px;top:65px;width:49px;height:20.5px;background:#fff;border:1px solid #c4d2e8;border-top-color:#9fb0cc;border-radius:2.5px;box-sizing:border-box;box-shadow:0 0 0 1px rgba(255,255,255,.7);"></div>
<span class="t" style="left:1176.7px;top:69px;font-size:12px;line-height:14px;">1</span>
<span class="t" style="left:1179.12px;top:90px;font-size:12px;line-height:14px;">of</span>
<span class="t" style="left:1197.86px;top:90px;font-size:12px;line-height:14px;">4</span>
<span class="t" style="left:1232.98px;top:98px;font-size:11.53px;line-height:12px;color:#15428b;letter-spacing:-0.289px;">Next</span>
<span class="t" style="left:1274.94px;top:97px;font-size:12px;line-height:14px;color:#15428b;letter-spacing:-0.253px;">Last</span>
<span class="t" style="left:1333.66px;top:64px;font-size:11.76px;line-height:13px;color:#15428b;letter-spacing:-0.286px;">Refresh</span>
<span class="t" style="left:1334.07px;top:90px;font-size:11.76px;line-height:13px;color:#8d8d8d;letter-spacing:-0.323px;">Stop</span>
<span class="t" style="left:1333.71px;top:116px;font-size:11.07px;line-height:12px;color:#8d8d8d;letter-spacing:-0.336px;">Back</span>
<span class="t" style="left:1453.86px;top:97px;font-size:11.76px;line-height:13px;color:#15428b;letter-spacing:-0.307px;">Print</span>
<span class="t" style="left:1494.7px;top:98px;font-size:11.3px;line-height:12px;color:#15428b;letter-spacing:-0.275px;">Page</span>
<span class="t" style="left:1493.39px;top:112px;font-size:11.3px;line-height:12px;color:#15428b;letter-spacing:-0.332px;">Setup</span>
<div class="a" style="left:1530.5px;top:60px;width:43.5px;height:70px;border-radius:3px;background:linear-gradient(180deg,#fdf3c8 0,#fcdf8b 18%,#fbc950 40%,#fbc64a 55%,#fcd978 75%,#fdeeb2 100%);"></div>
<span class="t" style="left:1540.16px;top:97px;font-size:11.76px;line-height:13px;color:#15428b;letter-spacing:-0.307px;">Print</span>
<span class="t" style="left:1534.14px;top:111px;font-size:12px;line-height:14px;color:#15428b;letter-spacing:-0.268px;">Layout</span>
<span class="t" style="left:1587.84px;top:97px;font-size:12px;line-height:14px;color:#15428b;letter-spacing:-0.332px;">Export</span>
<svg class="a" style="left:1601px;top:115px;" width="8" height="6" viewBox="0 0 8 6"><path d="M1 1.5h5.5l-2.75 3z" fill="#5a7fbf"/></svg>
<span class="t" style="left:1658.67px;top:64px;font-size:11.64px;line-height:13px;color:#8d8d8d;letter-spacing:-0.304px;">Document Map</span>
<span class="t" style="left:1658.68px;top:93px;font-size:11.53px;line-height:12px;color:#8d8d8d;letter-spacing:-0.341px;">Parameters</span>
<div class="a" style="left:1751px;top:73px;width:80px;height:21px;background:#f0f0f0;border:1px solid #b4b4b4;border-radius:2px;box-sizing:border-box;box-shadow:0 0 0 1px rgba(255,255,255,.8);"></div>
<svg class="a" style="left:0;top:0;pointer-events:none" width="1920" height="1200" viewBox="0 0 1920 1200"><defs><linearGradient id="bl" x1="0" y1="0" x2="1" y2="1"><stop offset="0" stop-color="#7ea6ec"/><stop offset="1" stop-color="#2f5cc0"/></linearGradient><linearGradient id="bld" x1="0" y1="0" x2="1" y2="1"><stop offset="0" stop-color="#c4d8f6"/><stop offset="1" stop-color="#a5c0ea"/></linearGradient><linearGradient id="prn" x1="0" y1="0" x2="0" y2="1"><stop offset="0" stop-color="#d8d8d8"/><stop offset=".5" stop-color="#a8a8a8"/><stop offset="1" stop-color="#e4e4e4"/></linearGradient><linearGradient id="pg" x1="0" y1="0" x2="1" y2="1"><stop offset="0" stop-color="#ffffff"/><stop offset="1" stop-color="#e6ebf3"/></linearGradient><linearGradient id="tri" x1="0" y1="0" x2="1" y2="1"><stop offset="0" stop-color="#8fa8ee"/><stop offset="1" stop-color="#4f6fd0"/></linearGradient><radialGradient id="lens" cx=".4" cy=".35" r=".7"><stop offset="0" stop-color="#f4faff"/><stop offset="1" stop-color="#a9c8f0"/></radialGradient></defs><g transform="translate(983,64)"><path d="M1.5 2V21.5H20.5z" fill="url(#tri)" stroke="#4a62c0" stroke-width=".8"/><path d="M5.5 11.5V17.5H11.5z" fill="#dbe6fb" stroke="#4a62c0" stroke-width=".7"/><path d="M8.5 20.5L10 17L25.5 1.5L29 5L13 20z" fill="#f6d25a" stroke="#a8862a" stroke-width=".8"/><path d="M8.5 20.5L10 17L12.5 19.5z" fill="#f0d0a0"/><path d="M8.5 20.5l1-.8" stroke="#333" stroke-width="1"/><path d="M25.5 1.5L29 5L30 3.6L27 .5z" fill="#e05a5a"/><path d="M24.3 2.7L27.8 6.2" stroke="#4a8a4a" stroke-width="1.2"/><rect x="3.5" y="22" width="26" height="4.5" fill="#f2c84a" stroke="#b08a20" stroke-width=".8"/><path d="M6 22.5v2M8.5 22.5v1.3M11 22.5v2M13.5 22.5v1.3M16 22.5v2M18.5 22.5v1.3M21 22.5v2M23.5 22.5v1.3M26 22.5v2" stroke="#fff8d0" stroke-width=".9"/></g><g transform="translate(1039,64)"><path d="M10.5 15.5L16 26" stroke="#8a8a8a" stroke-width="3" stroke-linecap="round"/><path d="M10.8 16.5L15.5 25.5" stroke="#d8d8d8" stroke-width="1"/><circle cx="9" cy="9" r="8" fill="url(#lens)" stroke="#8a9cb8" stroke-width="1.3"/><path d="M3.5 8C4 5 6.5 3.3 9 3.3" fill="none" stroke="#fff" stroke-width="1.3"/></g><g transform="translate(1085,66)"><rect x=".5" y=".5" width="5" height="25" fill="url(#bld)" stroke="#b5cbee" stroke-width=".8"/><path d="M26.5 1V25L7 13z" fill="url(#bld)" stroke="#b5cbee" stroke-width=".8"/></g><g transform="translate(1136,66)"><path d="M20.5 1V25L.8 13z" fill="url(#bld)" stroke="#b5cbee" stroke-width=".8"/></g><g transform="translate(1234,67)"><path d="M.5 .5V24L20 12.2z" fill="url(#bl)" stroke="#4a74d0" stroke-width=".8"/></g><g transform="translate(1272,66)"><path d="M.5 1.5V25L20 13.2z" fill="url(#bl)" stroke="#4a74d0" stroke-width=".8"/><rect x="21.5" y=".5" width="5" height="25" fill="url(#bl)" stroke="#4a74d0" stroke-width=".8"/></g><g transform="translate(1313.6,65.7)"><defs><linearGradient id="gr" x1="0" y1="0" x2="0" y2="1"><stop offset="0" stop-color="#8ad860"/><stop offset="1" stop-color="#3a9a18"/></linearGradient></defs><path d="M4.3 .8L8.6 5H6.2V8.3C6.2 9.8 7.2 10.6 8.8 10.8L8.2 12.7C5 12.7 2.6 11 2.6 8.3V5H.2z" fill="url(#gr)" stroke="#2f8612" stroke-width=".7" stroke-linejoin="round"/><path d="M11.4 12.4L7.1 8.2H9.5V4.9C9.5 3.4 8.5 2.6 6.9 2.4L7.5 .5C10.7 .5 13.1 2.2 13.1 4.9V8.2H15.5z" fill="url(#gr)" stroke="#2f8612" stroke-width=".7" stroke-linejoin="round"/></g><g transform="translate(1316,91)"><path d="M1.2 1.4L10 10.8M10 1.4L1.2 10.8" stroke="#f08878" stroke-width="2.7" stroke-linecap="square"/></g><g transform="translate(1315,116)"><defs><linearGradient id="bk" x1="0" y1="0" x2="0" y2="1"><stop offset="0" stop-color="#c9dbf7"/><stop offset="1" stop-color="#9fbcec"/></linearGradient></defs><path d="M.5 6.5L6.5 .8V4H13.5V9H6.5V12.2z" fill="url(#bk)" stroke="#9ab6e4" stroke-width=".9"/></g><g transform="translate(1452,64)"><g transform="scale(1.0)"><path d="M7 8L8.5 1H20L21.5 8z" fill="#fff" stroke="#9a9a9a" stroke-width=".8"/><rect x=".5" y="8" width="27" height="13" rx="2" fill="url(#prn)" stroke="#7c7c7c" stroke-width=".8"/><rect x="1.5" y="9" width="25" height="3.5" rx="1" fill="#ececec"/><rect x="17" y="16.3" width="4.5" height="1.5" fill="#4a90e8"/><circle cx="3.5" cy="13.8" r=".8" fill="#fff"/><path d="M24.5 11.5v5" stroke="#fff" stroke-width="1" stroke-dasharray="1 1"/><path d="M7.5 18.5H20.5V27.5H7.5z" fill="#fff" stroke="#8a9ab8" stroke-width=".8"/><rect x="9.5" y="20.5" width="9" height="5.5" fill="#8ec4f4"/><path d="M9.5 26l3-3.5 2 2 2-2.5 2 4z" fill="#3a78d0"/><circle cx="15.5" cy="21.5" r="1" fill="#e05030"/></g></g><g transform="translate(1491,63)"><path d="M.5 .5H13.5L18.5 5.5V27.5H.5z" fill="url(#pg)" stroke="#a8b0c0" stroke-width="1"/><path d="M13.5 .5V5.5H18.5z" fill="#e4e9f2" stroke="#a8b0c0" stroke-width=".8"/><circle cx="4.2" cy="10" r="1.4" fill="none" stroke="#7a8498" stroke-width=".9"/><circle cx="4.2" cy="15" r="1.4" fill="none" stroke="#7a8498" stroke-width=".9"/><circle cx="4.2" cy="20" r="1.4" fill="none" stroke="#7a8498" stroke-width=".9"/><path d="M7 10h6M7 15h3M7 20h2" stroke="#b9c4d8" stroke-width="1"/><g transform="translate(8.5,9)"><g transform="scale(0.76)"><path d="M7 8L8.5 1H20L21.5 8z" fill="#fff" stroke="#9a9a9a" stroke-width=".8"/><rect x=".5" y="8" width="27" height="13" rx="2" fill="url(#prn)" stroke="#7c7c7c" stroke-width=".8"/><rect x="1.5" y="9" width="25" height="3.5" rx="1" fill="#ececec"/><rect x="17" y="16.3" width="4.5" height="1.5" fill="#4a90e8"/><circle cx="3.5" cy="13.8" r=".8" fill="#fff"/><path d="M24.5 11.5v5" stroke="#fff" stroke-width="1" stroke-dasharray="1 1"/><path d="M7.5 18.5H20.5V27.5H7.5z" fill="#fff" stroke="#8a9ab8" stroke-width=".8"/><rect x="9.5" y="20.5" width="9" height="5.5" fill="#8ec4f4"/><path d="M9.5 26l3-3.5 2 2 2-2.5 2 4z" fill="#3a78d0"/><circle cx="15.5" cy="21.5" r="1" fill="#e05030"/></g></g></g><g transform="translate(1538,63)"><path d="M5.5 1.5H27.5M5.5 0V3.2M27.5 0V3.2" stroke="#2a3f80" stroke-width="1"/><path d="M1.5 4.5V32M0 4.5H3.2M0 32H3.2" stroke="#2a3f80" stroke-width="1"/><g transform="translate(5.5,4.5)"><path d="M.5 .5H15.5L21.5 6.5V27.5H.5z" fill="url(#pg)" stroke="#8d98ae" stroke-width="1"/><path d="M15.5 .5V6.5H21.5z" fill="#dfe6f2" stroke="#8d98ae" stroke-width=".8"/><path d="M3 8h8M13 10.5h6M3 10.5h8M3 13h8M13 13h6M3 15.5h6" stroke="#b9c4d8" stroke-width="1"/><rect x="3" y="20" width="4" height="5.5" fill="#f05a28"/><rect x="9" y="18" width="4" height="7.5" fill="#2a7ae0"/><rect x="15" y="15" width="4" height="10.5" fill="#2ea82e"/></g></g><g transform="translate(1590,63)"><path d="M.5 .5H15.5L21.5 6.5V27.5H.5z" fill="url(#pg)" stroke="#8d98ae" stroke-width="1"/><path d="M15.5 .5V6.5H21.5z" fill="#dfe6f2" stroke="#8d98ae" stroke-width=".8"/><path d="M3 8h8M13 10.5h6M3 10.5h8M3 13h8M13 13h6M3 15.5h6" stroke="#b9c4d8" stroke-width="1"/><rect x="3" y="20" width="4" height="5.5" fill="#f05a28"/><rect x="9" y="18" width="4" height="7.5" fill="#2a7ae0"/><rect x="15" y="15" width="4" height="10.5" fill="#2ea82e"/><path d="M18 19C19 24 22 26.5 25 26.5V23.5L30.5 28L25 32.5V29.5C21 29.5 18 25 18 19z" fill="#4a86e0" stroke="#2a5ab0" stroke-width=".7"/></g><g transform="translate(1640,64)"><rect x=".5" y=".5" width="13" height="12" fill="#f4f7fc" stroke="#b5c3dc" stroke-width="1"/><rect x="1" y="1" width="12" height="2.2" fill="#c9d8f0"/><path d="M4.5 3.5V12" stroke="#c5d0e4" stroke-width="1"/><path d="M2 5.5h1.5M2 7.5h1.5M2 9.5h1.5M6 5.5h6M6 7.5h6M6 9.5h6" stroke="#b5c3dc" stroke-width="1"/></g><g transform="translate(1639,91)"><rect x=".5" y=".5" width="11" height="10.5" fill="#f4f7fc" stroke="#b5c3dc" stroke-width="1"/><rect x="1" y="1" width="10" height="2.2" fill="#c9d8f0"/><path d="M2 5.5h3M2 7.5h3M2 9.3h3M6.5 5.5h3" stroke="#a9b8d2" stroke-width="1"/><circle cx="11" cy="11" r="4.8" fill="#f0f0f0" stroke="#b8b8b8" stroke-width=".8"/><text x="11" y="14" font-family="'Liberation Sans',serif" font-size="9" font-weight="normal" fill="#8a8a8a" text-anchor="middle" >@</text></g><g transform="translate(1834,77)"><path d="M2.5 1H6V4L7 5.2H8L9 4V1H12.5V4L14.5 8.5V13H9.3V9H5.7V13H.5V8.5L2.5 4z" fill="#c2d3ee" stroke="#a9bde0" stroke-width=".8"/><rect x="1.8" y="8.5" width="2.6" height="3.5" fill="#e4ecf8"/><rect x="10.6" y="8.5" width="2.6" height="3.5" fill="#e4ecf8"/></g></svg>
<div class="a" style="left:971px;top:147px;width:944px;height:1px;background:#6d6d6d;"></div>
<div class="a" style="left:971px;top:148px;width:1px;height:987px;background:#6d6d6d;"></div>
<div class="a" style="left:1914px;top:148px;width:1px;height:987px;background:#5a5a5a;"></div>
<div class="a" style="left:972px;top:148px;width:925px;height:969px;background:#808080;"></div>
<div class="a" style="left:1034px;top:160px;width:819px;height:957px;background:#fff;border:1px solid #000;border-right-width:2px;border-bottom:none;box-sizing:border-box;"></div>
<div class="a" style="left:1897px;top:148px;width:17px;height:969px;background:linear-gradient(90deg,#f4f4f4 0,#f0f0f0 30%,#ececec 100%);"></div>
<div class="a" style="left:1898px;top:174px;width:15px;height:760px;border:1px solid #979797;border-radius:2px;box-sizing:border-box;background:linear-gradient(90deg,#fafafa 0,#ececec 45%,#d8d8da 50%,#c2c2c6 88%,#d0d0d0 100%);"></div>
<svg class="a" style="left:1897px;top:148px;" width="18" height="969" viewBox="0 0 18 969"><path d="M5.3 11.3 L9 7.6 L12.7 11.3Z" fill="#303030"/><path d="M5.5 958 h7 l-3.5 4z" fill="#404040"/><path d="M5.5 435.5h7M5.5 437.5h7M5.5 439.5h7" stroke="#6b7480" stroke-width="1"/><path d="M5.5 436.5h7M5.5 438.5h7M5.5 440.5h7" stroke="#fff" stroke-width="1"/></svg>
<div class="a" style="left:972px;top:1117px;width:943px;height:18px;background:linear-gradient(180deg,#e3e3e3 0,#f0f0f0 30%,#f6f6f6 100%);"></div>
<div class="a" style="left:990.5px;top:1118px;width:872px;height:16px;border:1px solid #979797;border-radius:2px;box-sizing:border-box;background:linear-gradient(180deg,#f3f3f3 0,#e9e9e9 45%,#d7d7d8 50%,#cfcfd1 100%);box-shadow:inset 0 0 0 1px rgba(255,255,255,.7);"></div>
<svg class="a" style="left:972px;top:1117px;" width="943" height="18" viewBox="0 0 943 18"><path d="M11 5v7l-4.5-3.5z" fill="#404040"/><path d="M914 5v7l4.5-3.5z" fill="#404040"/><path d="M450.5 5v7M452.5 5v7M454.5 5v7" stroke="#6b7480" stroke-width="1"/><path d="M451.5 5v7M453.5 5v7M455.5 5v7" stroke="#fff" stroke-width="1"/></svg>
<div class="a" style="left:1897px;top:1117px;width:18px;height:18px;background:#f0f0f0;"></div>
<div class="a" style="left:972px;top:1135px;width:943px;height:1px;background:#86a5d6;"></div>
<div class="a" style="left:972px;top:1136px;width:943px;height:22px;background:linear-gradient(180deg,#d9e7fa 0,#e3eefc 3px,#d3e3f8 9px,#c3d8f5 10px,#c9dcf6 17px,#d9e7fa 22px);"></div>
<div class="a" style="left:1677px;top:1136px;width:238px;height:22px;background:linear-gradient(180deg,#b5cff2 0,#c3d9f6 3px,#a9c7ef 9px,#8fb3e6 11px,#9dbdea 17px,#b8d1f3 22px);border-left:1px solid #86a5d6;box-sizing:border-box;"></div>
<div class="a" style="left:972px;top:1158px;width:943px;height:1px;background:#86a5d6;"></div>
<span class="t" style="left:995.94px;top:1140px;font-size:12px;line-height:14px;letter-spacing:-0.014px;">No current report server.</span>
<div class="a" style="left:1682px;top:1138px;width:19px;height:19px;background:linear-gradient(180deg,#c7dbf6,#a9c6ee);"></div>
<div class="a" style="left:1701px;top:1138px;width:19px;height:19px;background:linear-gradient(180deg,#fddf9a 0,#fbbd55 50%,#fcd27f 100%);"></div>
<span class="t" style="left:1729.23px;top:1140px;font-size:11.64px;line-height:13px;letter-spacing:-0.276px;">100%</span>
<div class="a" style="left:1767.5px;top:1138px;width:16px;height:16px;border-radius:50%;background:radial-gradient(circle at 50% 35%,#f4f8fe 0,#d3e2f8 60%,#b5cdf0 100%);border:1px solid #6b8fc9;box-sizing:border-box;"></div>
<div class="a" style="left:1771.5px;top:1145px;width:8px;height:2px;background:#5b6f92;"></div>
<div class="a" style="left:1787px;top:1146px;width:103px;height:1px;background:#e6eefb;box-shadow:0 -1px 0 #7f9fd0;"></div>
<svg class="a" style="left:1832px;top:1138px;" width="12" height="16" viewBox="0 0 12 16"><path d="M1.5 1.5h8v9l-4 4-4-4z" fill="#dfe9f8" stroke="#5b7fb8"/><path d="M5.5 4v5" stroke="#8aa" stroke-width="1"/></svg>
<div class="a" style="left:1893px;top:1138px;width:16px;height:16px;border-radius:50%;background:radial-gradient(circle at 50% 35%,#f4f8fe 0,#d3e2f8 60%,#b5cdf0 100%);border:1px solid #6b8fc9;box-sizing:border-box;"></div>
<div class="a" style="left:1897px;top:1145px;width:8px;height:2px;background:#5b6f92;"></div>
<div class="a" style="left:1900px;top:1142px;width:2px;height:8px;background:#5b6f92;"></div>
<svg class="a" style="left:0;top:0;pointer-events:none" width="1920" height="1200" viewBox="0 0 1920 1200"><g transform="translate(977,1139)"><rect x=".5" y=".5" width="7" height="14" fill="#eef3fa" stroke="#8a9ab8" stroke-width=".9"/><path d="M1.5 3h5M1.5 5.5h5" stroke="#a9b8d2" stroke-width="1"/><rect x="4.8" y="11.3" width="1.2" height="1.2" fill="#3ac03a"/><circle cx="11.5" cy="11" r="3.8" fill="#fff" stroke="#8a8a8a" stroke-width=".9"/></g><g transform="translate(1685,1139)"><path d="M1.5 1.5V14L5 10.5z" fill="none" stroke="#4a5a80" stroke-width=".9"/><path d="M3.5 13L5 9.5L13 2L15.5 4.5L7.5 12z" fill="#f2d060" stroke="#8a6a20" stroke-width=".8"/><path d="M13 2L15.5 4.5L16.5 3.5L14 1z" fill="#e05050"/></g><g transform="translate(1704,1140)"><path d="M.5 .5H7.5L10 3V13.5H.5z" fill="#fff" stroke="#7a86a0" stroke-width=".9"/><path d="M2 4h4M2 6h6" stroke="#a9b4c8" stroke-width=".9"/><rect x="2" y="9" width="1.8" height="3.3" fill="#e05028"/><rect x="4.4" y="8" width="1.8" height="4.3" fill="#2a7ae0"/><rect x="6.8" y="7" width="1.8" height="5.3" fill="#2ea82e"/><circle cx="10.5" cy="10.5" r="2.5" fill="#dfe8f4" stroke="#7a86a0" stroke-width=".8"/></g></svg>
<div class="a" style="left:1057px;top:175px;width:766px;height:17px;background:linear-gradient(180deg,#a6cdfc 0,#cde2fd 24%,#ebf3fe 50%,#fafcff 73%,#fff 92%);"></div>
<span class="t" style="left:1056.06px;top:207px;font-size:16px;line-height:17px;color:#0000ff;font-weight:bold;letter-spacing:0.009px;">Crystal Migration Services - the # 1 to</span>
<span class="t" style="left:1346.72px;top:207px;font-size:16px;line-height:17px;color:#0000ff;font-style:italic;letter-spacing:-0.017px;">Convert Crystal Reports to SSRS</span>
<div class="a" style="left:1623px;top:206px;width:81px;height:16px;border:1px solid #b0b0b0;box-sizing:border-box;"></div>
<span class="t" style="left:1623.03px;top:207px;font-size:13.33px;line-height:15px;letter-spacing:0.038px;">04-Oct-2013</span>
<span class="t" style="left:1743.13px;top:207px;font-size:13.33px;line-height:15px;font-weight:bold;letter-spacing:0.148px;">Page 1 of 4</span>
<span class="t" style="left:1056.22px;top:231px;font-size:12px;line-height:14px;color:#008b8b;font-weight:bold;letter-spacing:-0.041px;">Features: Record Selection Formula, Grouping, Sorting, Running Total, Highlighting, Hyperlink, Percentage Summary...</span>
<span class="t" style="left:1056.17px;top:263px;font-size:13.33px;line-height:15px;font-weight:bold;letter-spacing:-0.17px;">Country</span>
<span class="t" style="left:1175.43px;top:263px;font-size:13.33px;line-height:15px;font-weight:bold;letter-spacing:0.196px;">Region</span>
<span class="t" style="left:1303.77px;top:263px;font-size:13.33px;line-height:15px;font-weight:bold;letter-spacing:0.058px;">Customer Name</span>
<span class="t" style="left:1480.43px;top:263px;font-size:13.33px;line-height:15px;font-weight:bold;letter-spacing:0.073px;">Last Year's Sales</span>
<span class="t" style="left:1627.13px;top:263px;font-size:13.33px;line-height:15px;font-weight:bold;letter-spacing:0.14px;">Pecentage</span>
<span class="t" style="left:1716.63px;top:263px;font-size:13.33px;line-height:15px;font-weight:bold;letter-spacing:0.388px;">Running Total</span>
<div class="a" style="left:1057px;top:287px;width:765px;height:2px;background:#e36c0a;"></div>
<span class="t" style="left:1055.7px;top:296px;font-size:13.33px;line-height:15px;color:#000080;font-weight:bold;letter-spacing:-0.1px;">Belgium</span>
<span class="t" style="left:1305px;top:296px;font-size:13.33px;line-height:15px;font-weight:bold;letter-spacing:-0.05px;">Summary of Belgium</span>
<span class="t" style="left:1515.65px;top:296px;font-size:13.33px;line-height:15px;font-weight:bold;">$200,000.00</span>
<div class="a" style="left:1057px;top:311px;width:767px;height:17px;background:#e8f2fd;"></div>
<span class="t" style="left:1176px;top:311px;font-size:13.33px;line-height:15px;">Brussels</span>
<span class="t" style="left:1304.2px;top:311px;font-size:13.33px;line-height:15px;">Belgium Bike Co.</span>
<span class="t" style="left:1516.95px;top:311px;font-size:13.33px;line-height:15px;color:#ff00ff;letter-spacing:-0.1px;">$200,000.00</span>
<span class="t" style="left:1642.41px;top:311px;font-size:13.33px;line-height:15px;letter-spacing:-0.1px;">100.00%</span>
<span class="t" style="left:1734.85px;top:311px;font-size:13.33px;line-height:15px;letter-spacing:-0.1px;">$200,000.00</span>
<span class="t" style="left:1055.7px;top:343px;font-size:13.33px;line-height:15px;color:#000080;font-weight:bold;letter-spacing:-0.1px;">Canada</span>
<span class="t" style="left:1305px;top:343px;font-size:13.33px;line-height:15px;font-weight:bold;letter-spacing:-0.05px;">Summary of Canada</span>
<span class="t" style="left:1515.72px;top:343px;font-size:13.33px;line-height:15px;font-weight:bold;">$166,031.37</span>
<span class="t" style="left:1176px;top:358px;font-size:13.33px;line-height:15px;">BC</span>
<span class="t" style="left:1304.2px;top:358px;font-size:13.33px;line-height:15px;">Pedal Pusher Bikes Inc.</span>
<span class="t" style="left:1524.32px;top:358px;font-size:13.33px;line-height:15px;color:#ff00ff;letter-spacing:-0.1px;">$39,277.38</span>
<span class="t" style="left:1649.71px;top:358px;font-size:13.33px;line-height:15px;letter-spacing:-0.1px;">23.66%</span>
<span class="t" style="left:1742.22px;top:358px;font-size:13.33px;line-height:15px;letter-spacing:-0.1px;">$39,277.38</span>
<div class="a" style="left:1057px;top:376px;width:767px;height:17px;background:#e8f2fd;"></div>
<span class="t" style="left:1176px;top:375px;font-size:13.33px;line-height:15px;">BC</span>
<span class="t" style="left:1304.2px;top:375px;font-size:13.33px;line-height:15px;">Crazy Wheels</span>
<span class="t" style="left:1524.32px;top:375px;font-size:13.33px;line-height:15px;color:#ff00ff;letter-spacing:-0.1px;">$38,280.53</span>
<span class="t" style="left:1649.71px;top:375px;font-size:13.33px;line-height:15px;letter-spacing:-0.1px;">23.06%</span>
<span class="t" style="left:1742.28px;top:375px;font-size:13.33px;line-height:15px;letter-spacing:-0.1px;">$77,557.91</span>
<span class="t" style="left:1176px;top:393px;font-size:13.33px;line-height:15px;">BC</span>
<span class="t" style="left:1304.2px;top:393px;font-size:13.33px;line-height:15px;">Cycles and Sports</span>
<span class="t" style="left:1524.25px;top:393px;font-size:13.33px;line-height:15px;color:#ff00ff;letter-spacing:-0.1px;">$38,199.10</span>
<span class="t" style="left:1649.71px;top:393px;font-size:13.33px;line-height:15px;letter-spacing:-0.1px;">23.01%</span>
<span class="t" style="left:1735.98px;top:393px;font-size:13.33px;line-height:15px;letter-spacing:-0.1px;">$115,757.01</span>
<div class="a" style="left:1057px;top:410px;width:767px;height:17px;background:#e8f2fd;"></div>
<span class="t" style="left:1176px;top:410px;font-size:13.33px;line-height:15px;">BC</span>
<span class="t" style="left:1304.2px;top:410px;font-size:13.33px;line-height:15px;">Biking's It Industries</span>
<span class="t" style="left:1524.38px;top:410px;font-size:13.33px;line-height:15px;color:#ff00ff;letter-spacing:-0.1px;">$30,348.92</span>
<span class="t" style="left:1649.71px;top:410px;font-size:13.33px;line-height:15px;letter-spacing:-0.1px;">18.28%</span>
<span class="t" style="left:1734.92px;top:410px;font-size:13.33px;line-height:15px;letter-spacing:-0.1px;">$146,105.93</span>
<span class="t" style="left:1176px;top:427px;font-size:13.33px;line-height:15px;">BC</span>
<span class="t" style="left:1304.2px;top:427px;font-size:13.33px;line-height:15px;">Bikes for Tykes</span>
<span class="t" style="left:1531.55px;top:427px;font-size:13.33px;line-height:15px;letter-spacing:-0.1px;">$1,800.00</span>
<span class="t" style="left:1657.08px;top:427px;font-size:13.33px;line-height:15px;letter-spacing:-0.1px;">1.08%</span>
<span class="t" style="left:1734.92px;top:427px;font-size:13.33px;line-height:15px;letter-spacing:-0.1px;">$147,905.93</span>
<div class="a" style="left:1057px;top:445px;width:767px;height:17px;background:#e8f2fd;"></div>
<span class="t" style="left:1176px;top:445px;font-size:13.33px;line-height:15px;">MB</span>
<span class="t" style="left:1304.2px;top:445px;font-size:13.33px;line-height:15px;">Dag City Cycle</span>
<span class="t" style="left:1531.41px;top:445px;font-size:13.33px;line-height:15px;letter-spacing:-0.1px;">$1,276.74</span>
<span class="t" style="left:1657.08px;top:445px;font-size:13.33px;line-height:15px;letter-spacing:-0.1px;">0.77%</span>
<span class="t" style="left:1734.99px;top:445px;font-size:13.33px;line-height:15px;letter-spacing:-0.1px;">$149,182.67</span>
<span class="t" style="left:1176px;top:462px;font-size:13.33px;line-height:15px;">NS</span>
<span class="t" style="left:1304.2px;top:462px;font-size:13.33px;line-height:15px;">Halifax Cycle Centre</span>
<span class="t" style="left:1531.61px;top:462px;font-size:13.33px;line-height:15px;letter-spacing:-0.1px;">$1,489.05</span>
<span class="t" style="left:1657.08px;top:462px;font-size:13.33px;line-height:15px;letter-spacing:-0.1px;">0.90%</span>
<span class="t" style="left:1734.99px;top:462px;font-size:13.33px;line-height:15px;letter-spacing:-0.1px;">$150,671.72</span>
<div class="a" style="left:1057px;top:480px;width:767px;height:17px;background:#e8f2fd;"></div>
<span class="t" style="left:1176px;top:479px;font-size:13.33px;line-height:15px;">ON</span>
<span class="t" style="left:1304.2px;top:479px;font-size:13.33px;line-height:15px;">Cycle Fever</span>
<span class="t" style="left:1531.55px;top:479px;font-size:13.33px;line-height:15px;letter-spacing:-0.1px;">$6,629.10</span>
<span class="t" style="left:1657.08px;top:479px;font-size:13.33px;line-height:15px;letter-spacing:-0.1px;">3.99%</span>
<span class="t" style="left:1734.99px;top:479px;font-size:13.33px;line-height:15px;letter-spacing:-0.1px;">$157,300.82</span>
<span class="t" style="left:1176px;top:497px;font-size:13.33px;line-height:15px;">ON</span>
<span class="t" style="left:1304.2px;top:497px;font-size:13.33px;line-height:15px;">Don't Tread On Me</span>
<span class="t" style="left:1531.55px;top:497px;font-size:13.33px;line-height:15px;letter-spacing:-0.1px;">$5,879.70</span>
<span class="t" style="left:1657.08px;top:497px;font-size:13.33px;line-height:15px;letter-spacing:-0.1px;">3.54%</span>
<span class="t" style="left:1734.99px;top:497px;font-size:13.33px;line-height:15px;letter-spacing:-0.1px;">$163,180.52</span>
<div class="a" style="left:1057px;top:514px;width:767px;height:17px;background:#e8f2fd;"></div>
<span class="t" style="left:1176px;top:514px;font-size:13.33px;line-height:15px;">PQ</span>
<span class="t" style="left:1304.2px;top:514px;font-size:13.33px;line-height:15px;">Wheels 'n' Deals</span>
<span class="t" style="left:1531.61px;top:514px;font-size:13.33px;line-height:15px;letter-spacing:-0.1px;">$2,850.85</span>
<span class="t" style="left:1657.08px;top:514px;font-size:13.33px;line-height:15px;letter-spacing:-0.1px;">1.72%</span>
<span class="t" style="left:1734.99px;top:514px;font-size:13.33px;line-height:15px;letter-spacing:-0.1px;">$166,031.37</span>
<span class="t" style="left:1055.7px;top:546px;font-size:13.33px;line-height:15px;color:#000080;font-weight:bold;letter-spacing:-0.1px;">England</span>
<span class="t" style="left:1305px;top:546px;font-size:13.33px;line-height:15px;font-weight:bold;letter-spacing:-0.05px;">Summary of England</span>
<span class="t" style="left:1515.72px;top:546px;font-size:13.33px;line-height:15px;font-weight:bold;">$578,229.17</span>
<span class="t" style="left:1176px;top:561px;font-size:13.33px;line-height:15px;">Avon</span>
<span class="t" style="left:1304.2px;top:561px;font-size:13.33px;line-height:15px;">McDonald Klein Sports</span>
<span class="t" style="left:1531.55px;top:561px;font-size:13.33px;line-height:15px;letter-spacing:-0.1px;">$3,618.00</span>
<span class="t" style="left:1657.08px;top:561px;font-size:13.33px;line-height:15px;letter-spacing:-0.1px;">0.63%</span>
<span class="t" style="left:1749.45px;top:561px;font-size:13.33px;line-height:15px;letter-spacing:-0.1px;">$3,618.00</span>
<div class="a" style="left:1057px;top:579px;width:767px;height:17px;background:#e8f2fd;"></div>
<span class="t" style="left:1176px;top:578px;font-size:13.33px;line-height:15px;">Berkshire</span>
<span class="t" style="left:1304.2px;top:578px;font-size:13.33px;line-height:15px;">Life Cycle Centre</span>
<span class="t" style="left:1531.61px;top:578px;font-size:13.33px;line-height:15px;letter-spacing:-0.1px;">$8,819.55</span>
<span class="t" style="left:1657.08px;top:578px;font-size:13.33px;line-height:15px;letter-spacing:-0.1px;">1.53%</span>
<span class="t" style="left:1742.22px;top:578px;font-size:13.33px;line-height:15px;letter-spacing:-0.1px;">$12,437.55</span>
<span class="t" style="left:1176px;top:595px;font-size:13.33px;line-height:15px;">Cambridgeshire</span>
<span class="t" style="left:1304.2px;top:595px;font-size:13.33px;line-height:15px;">Hit the Dirt</span>
<span class="t" style="left:1531.55px;top:595px;font-size:13.33px;line-height:15px;letter-spacing:-0.1px;">$4,637.00</span>
<span class="t" style="left:1657.08px;top:595px;font-size:13.33px;line-height:15px;letter-spacing:-0.1px;">0.80%</span>
<span class="t" style="left:1742.22px;top:595px;font-size:13.33px;line-height:15px;letter-spacing:-0.1px;">$17,074.55</span>
<div class="a" style="left:1057px;top:614px;width:767px;height:17px;background:#e8f2fd;"></div>
<span class="t" style="left:1176px;top:613px;font-size:13.33px;line-height:15px;">Co Durham</span>
<span class="t" style="left:1304.2px;top:613px;font-size:13.33px;line-height:15px;">Donview Bike Co.</span>
<span class="t" style="left:1549.78px;top:613px;font-size:13.33px;line-height:15px;letter-spacing:-0.1px;">$35.00</span>
<span class="t" style="left:1657.08px;top:613px;font-size:13.33px;line-height:15px;letter-spacing:-0.1px;">0.01%</span>
<span class="t" style="left:1742.22px;top:613px;font-size:13.33px;line-height:15px;letter-spacing:-0.1px;">$17,109.55</span>
<span class="t" style="left:1176px;top:630px;font-size:13.33px;line-height:15px;">Devon</span>
<span class="t" style="left:1304.2px;top:630px;font-size:13.33px;line-height:15px;">Exeter Cycle Source</span>
<span class="t" style="left:1531.61px;top:630px;font-size:13.33px;line-height:15px;letter-spacing:-0.1px;">$1,030.08</span>
<span class="t" style="left:1657.08px;top:630px;font-size:13.33px;line-height:15px;letter-spacing:-0.1px;">0.18%</span>
<span class="t" style="left:1742.22px;top:630px;font-size:13.33px;line-height:15px;letter-spacing:-0.1px;">$18,139.63</span>
<div class="a" style="left:1057px;top:648px;width:767px;height:17px;background:#e8f2fd;"></div>
<span class="t" style="left:1176px;top:647px;font-size:13.33px;line-height:15px;">Dorset</span>
<span class="t" style="left:1304.2px;top:647px;font-size:13.33px;line-height:15px;">Source One Cycle</span>
<span class="t" style="left:1532.55px;top:647px;font-size:13.33px;line-height:15px;letter-spacing:-0.1px;">$1,119.50</span>
<span class="t" style="left:1657.08px;top:647px;font-size:13.33px;line-height:15px;letter-spacing:-0.1px;">0.19%</span>
<span class="t" style="left:1742.22px;top:647px;font-size:13.33px;line-height:15px;letter-spacing:-0.1px;">$19,259.13</span>
<span class="t" style="left:1176px;top:665px;font-size:13.33px;line-height:15px;">Greater London</span>
<span class="t" style="left:1304.2px;top:665px;font-size:13.33px;line-height:15px;">BBS Pty</span>
<span class="t" style="left:1516.95px;top:665px;font-size:13.33px;line-height:15px;color:#ff00ff;letter-spacing:-0.1px;">$500,000.00</span>
<span class="t" style="left:1649.71px;top:665px;font-size:13.33px;line-height:15px;letter-spacing:-0.1px;">86.47%</span>
<span class="t" style="left:1734.92px;top:665px;font-size:13.33px;line-height:15px;letter-spacing:-0.1px;">$519,259.13</span>
<div class="a" style="left:1057px;top:683px;width:767px;height:17px;background:#e8f2fd;"></div>
<span class="t" style="left:1176px;top:682px;font-size:13.33px;line-height:15px;">Greater London</span>
<span class="t" style="left:1304.2px;top:682px;font-size:13.33px;line-height:15px;">Picadilly Cycle</span>
<span class="t" style="left:1531.61px;top:682px;font-size:13.33px;line-height:15px;letter-spacing:-0.1px;">$5,321.25</span>
<span class="t" style="left:1657.08px;top:682px;font-size:13.33px;line-height:15px;letter-spacing:-0.1px;">0.92%</span>
<span class="t" style="left:1734.92px;top:682px;font-size:13.33px;line-height:15px;letter-spacing:-0.1px;">$524,580.38</span>
<span class="t" style="left:1176px;top:699px;font-size:13.33px;line-height:15px;">Greater Manchester</span>
<span class="t" style="left:1304.2px;top:699px;font-size:13.33px;line-height:15px;">Great Outdoors</span>
<span class="t" style="left:1531.61px;top:699px;font-size:13.33px;line-height:15px;letter-spacing:-0.1px;">$3,024.85</span>
<span class="t" style="left:1657.08px;top:699px;font-size:13.33px;line-height:15px;letter-spacing:-0.1px;">0.52%</span>
<span class="t" style="left:1734.92px;top:699px;font-size:13.33px;line-height:15px;letter-spacing:-0.1px;">$527,605.23</span>
<div class="a" style="left:1057px;top:717px;width:767px;height:18px;background:#e8f2fd;"></div>
<span class="t" style="left:1176px;top:717px;font-size:13.33px;line-height:15px;">Hampshire</span>
<span class="t" style="left:1304.2px;top:717px;font-size:13.33px;line-height:15px;">Wheel to Wheel</span>
<span class="t" style="left:1531.55px;top:717px;font-size:13.33px;line-height:15px;letter-spacing:-0.1px;">$5,912.70</span>
<span class="t" style="left:1657.08px;top:717px;font-size:13.33px;line-height:15px;letter-spacing:-0.1px;">1.02%</span>
<span class="t" style="left:1734.92px;top:717px;font-size:13.33px;line-height:15px;letter-spacing:-0.1px;">$533,517.93</span>
<span class="t" style="left:1176px;top:734px;font-size:13.33px;line-height:15px;">Kent</span>
<span class="t" style="left:1304.2px;top:734px;font-size:13.33px;line-height:15px;">Sunrise Cycle</span>
<span class="t" style="left:1531.61px;top:734px;font-size:13.33px;line-height:15px;letter-spacing:-0.1px;">$1,690.05</span>
<span class="t" style="left:1657.08px;top:734px;font-size:13.33px;line-height:15px;letter-spacing:-0.1px;">0.29%</span>
<span class="t" style="left:1734.92px;top:734px;font-size:13.33px;line-height:15px;letter-spacing:-0.1px;">$535,207.98</span>
<div class="a" style="left:1057px;top:752px;width:767px;height:17px;background:#e8f2fd;"></div>
<span class="t" style="left:1176px;top:751px;font-size:13.33px;line-height:15px;">Nottinghamshire</span>
<span class="t" style="left:1304.2px;top:751px;font-size:13.33px;line-height:15px;">Tom's Bikes</span>
<span class="t" style="left:1524.25px;top:751px;font-size:13.33px;line-height:15px;color:#ff00ff;letter-spacing:-0.1px;">$36,330.00</span>
<span class="t" style="left:1657.08px;top:751px;font-size:13.33px;line-height:15px;letter-spacing:-0.1px;">6.28%</span>
<span class="t" style="left:1734.92px;top:751px;font-size:13.33px;line-height:15px;letter-spacing:-0.1px;">$571,537.98</span>
<span class="t" style="left:1176px;top:769px;font-size:13.33px;line-height:15px;">West Midlands</span>
<span class="t" style="left:1304.2px;top:769px;font-size:13.33px;line-height:15px;">Westerly Sports</span>
<span class="t" style="left:1549.78px;top:769px;font-size:13.33px;line-height:15px;letter-spacing:-0.1px;">$47.00</span>
<span class="t" style="left:1657.08px;top:769px;font-size:13.33px;line-height:15px;letter-spacing:-0.1px;">0.01%</span>
<span class="t" style="left:1734.92px;top:769px;font-size:13.33px;line-height:15px;letter-spacing:-0.1px;">$571,584.98</span>
<div class="a" style="left:1057px;top:786px;width:767px;height:18px;background:#e8f2fd;"></div>
<span class="t" style="left:1176px;top:786px;font-size:13.33px;line-height:15px;">West Yorkshire</span>
<span class="t" style="left:1304.2px;top:786px;font-size:13.33px;line-height:15px;">LifeCycle</span>
<span class="t" style="left:1531.68px;top:786px;font-size:13.33px;line-height:15px;letter-spacing:-0.1px;">$6,644.19</span>
<span class="t" style="left:1657.08px;top:786px;font-size:13.33px;line-height:15px;letter-spacing:-0.1px;">1.15%</span>
<span class="t" style="left:1734.99px;top:786px;font-size:13.33px;line-height:15px;letter-spacing:-0.1px;">$578,229.17</span>
<span class="t" style="left:1055.7px;top:818px;font-size:13.33px;line-height:15px;color:#000080;font-weight:bold;letter-spacing:-0.1px;">France</span>
<span class="t" style="left:1305px;top:818px;font-size:13.33px;line-height:15px;font-weight:bold;letter-spacing:-0.05px;">Summary of France</span>
<span class="t" style="left:1515.65px;top:818px;font-size:13.33px;line-height:15px;font-weight:bold;">$717,529.32</span>
<span class="t" style="left:1176px;top:833px;font-size:13.33px;line-height:15px;">Alsace</span>
<span class="t" style="left:1304.2px;top:833px;font-size:13.33px;line-height:15px;">Sports Alsace</span>
<span class="t" style="left:1524.25px;top:833px;font-size:13.33px;line-height:15px;color:#ff00ff;letter-spacing:-0.1px;">$52,787.50</span>
<span class="t" style="left:1657.08px;top:833px;font-size:13.33px;line-height:15px;letter-spacing:-0.1px;">7.36%</span>
<span class="t" style="left:1742.15px;top:833px;font-size:13.33px;line-height:15px;letter-spacing:-0.1px;">$52,787.50</span>
<div class="a" style="left:1057px;top:851px;width:767px;height:18px;background:#e8f2fd;"></div>
<span class="t" style="left:1176px;top:851px;font-size:13.33px;line-height:15px;">Alsace</span>
<span class="t" style="left:1304.2px;top:851px;font-size:13.33px;line-height:15px;">Mulhouse Vélos</span>
<span class="t" style="left:1531.55px;top:851px;font-size:13.33px;line-height:15px;letter-spacing:-0.1px;">$5,359.70</span>
<span class="t" style="left:1657.08px;top:851px;font-size:13.33px;line-height:15px;letter-spacing:-0.1px;">0.75%</span>
<span class="t" style="left:1742.15px;top:851px;font-size:13.33px;line-height:15px;letter-spacing:-0.1px;">$58,147.20</span>
<span class="t" style="left:1176px;top:868px;font-size:13.33px;line-height:15px;">Aquitaine</span>
<span class="t" style="left:1304.2px;top:868px;font-size:13.33px;line-height:15px;">Lourdes Sports</span>
<span class="t" style="left:1524.12px;top:868px;font-size:13.33px;line-height:15px;color:#ff00ff;letter-spacing:-0.1px;">$53,370.14</span>
<span class="t" style="left:1657.08px;top:868px;font-size:13.33px;line-height:15px;letter-spacing:-0.1px;">7.44%</span>
<span class="t" style="left:1736.72px;top:868px;font-size:13.33px;line-height:15px;letter-spacing:-0.1px;">$111,517.34</span>
<div class="a" style="left:1057px;top:886px;width:767px;height:17px;background:#e8f2fd;"></div>
<span class="t" style="left:1176px;top:885px;font-size:13.33px;line-height:15px;">Aquitaine</span>
<span class="t" style="left:1304.2px;top:885px;font-size:13.33px;line-height:15px;">Bordeaux Sports</span>
<span class="t" style="left:1542.55px;top:885px;font-size:13.33px;line-height:15px;letter-spacing:-0.1px;">$533.75</span>
<span class="t" style="left:1657.08px;top:885px;font-size:13.33px;line-height:15px;letter-spacing:-0.1px;">0.07%</span>
<span class="t" style="left:1735.98px;top:885px;font-size:13.33px;line-height:15px;letter-spacing:-0.1px;">$112,051.09</span>
<span class="t" style="left:1176px;top:903px;font-size:13.33px;line-height:15px;">Auvergne</span>
<span class="t" style="left:1304.2px;top:903px;font-size:13.33px;line-height:15px;">Arsenault et Maurier</span>
<span class="t" style="left:1524.25px;top:903px;font-size:13.33px;line-height:15px;color:#ff0000;letter-spacing:-0.1px;">$12,535.70</span>
<span class="t" style="left:1657.08px;top:903px;font-size:13.33px;line-height:15px;letter-spacing:-0.1px;">1.75%</span>
<span class="t" style="left:1734.99px;top:903px;font-size:13.33px;line-height:15px;letter-spacing:-0.1px;">$124,586.79</span>
<div class="a" style="left:1057px;top:920px;width:767px;height:18px;background:#e8f2fd;"></div>
<span class="t" style="left:1176px;top:920px;font-size:13.33px;line-height:15px;">Auvergne</span>
<span class="t" style="left:1304.2px;top:920px;font-size:13.33px;line-height:15px;">Auvergne Bicross</span>
<span class="t" style="left:1531.61px;top:920px;font-size:13.33px;line-height:15px;letter-spacing:-0.1px;">$5,179.98</span>
<span class="t" style="left:1657.08px;top:920px;font-size:13.33px;line-height:15px;letter-spacing:-0.1px;">0.72%</span>
<span class="t" style="left:1734.99px;top:920px;font-size:13.33px;line-height:15px;letter-spacing:-0.1px;">$129,766.77</span>
<span class="t" style="left:1176px;top:937px;font-size:13.33px;line-height:15px;">Basse Normandie</span>
<span class="t" style="left:1304.2px;top:937px;font-size:13.33px;line-height:15px;">France Sports</span>
<span class="t" style="left:1531.55px;top:937px;font-size:13.33px;line-height:15px;letter-spacing:-0.1px;">$7,544.40</span>
<span class="t" style="left:1657.08px;top:937px;font-size:13.33px;line-height:15px;letter-spacing:-0.1px;">1.05%</span>
<span class="t" style="left:1735.98px;top:937px;font-size:13.33px;line-height:15px;letter-spacing:-0.1px;">$137,311.17</span>
<div class="a" style="left:1057px;top:955px;width:767px;height:18px;background:#e8f2fd;"></div>
<span class="t" style="left:1176px;top:955px;font-size:13.33px;line-height:15px;">Basse Normandie</span>
<span class="t" style="left:1304.2px;top:955px;font-size:13.33px;line-height:15px;">Vélos Basse Normandie</span>
<span class="t" style="left:1531.55px;top:955px;font-size:13.33px;line-height:15px;letter-spacing:-0.1px;">$1,073.80</span>
<span class="t" style="left:1657.08px;top:955px;font-size:13.33px;line-height:15px;letter-spacing:-0.1px;">0.15%</span>
<span class="t" style="left:1734.99px;top:955px;font-size:13.33px;line-height:15px;letter-spacing:-0.1px;">$138,384.97</span>
<span class="t" style="left:1176px;top:972px;font-size:13.33px;line-height:15px;">Bourgogne</span>
<span class="t" style="left:1304.2px;top:972px;font-size:13.33px;line-height:15px;">Dijon Sud Vélos</span>
<span class="t" style="left:1531.61px;top:972px;font-size:13.33px;line-height:15px;letter-spacing:-0.1px;">$1,149.15</span>
<span class="t" style="left:1657.08px;top:972px;font-size:13.33px;line-height:15px;letter-spacing:-0.1px;">0.16%</span>
<span class="t" style="left:1734.99px;top:972px;font-size:13.33px;line-height:15px;letter-spacing:-0.1px;">$139,534.12</span>
<div class="a" style="left:1057px;top:990px;width:767px;height:17px;background:#e8f2fd;"></div>
<span class="t" style="left:1176px;top:989px;font-size:13.33px;line-height:15px;">Centre</span>
<span class="t" style="left:1304.2px;top:989px;font-size:13.33px;line-height:15px;">BMX Orléans</span>
<span class="t" style="left:1531.55px;top:989px;font-size:13.33px;line-height:15px;letter-spacing:-0.1px;">$5,438.70</span>
<span class="t" style="left:1657.08px;top:989px;font-size:13.33px;line-height:15px;letter-spacing:-0.1px;">0.76%</span>
<span class="t" style="left:1734.99px;top:989px;font-size:13.33px;line-height:15px;letter-spacing:-0.1px;">$144,972.82</span>
<span class="t" style="left:1176px;top:1007px;font-size:13.33px;line-height:15px;">Centre</span>
<span class="t" style="left:1304.2px;top:1007px;font-size:13.33px;line-height:15px;">Vélos Ferrier</span>
<span class="t" style="left:1531.55px;top:1007px;font-size:13.33px;line-height:15px;letter-spacing:-0.1px;">$2,229.50</span>
<span class="t" style="left:1657.08px;top:1007px;font-size:13.33px;line-height:15px;letter-spacing:-0.1px;">0.31%</span>
<span class="t" style="left:1734.99px;top:1007px;font-size:13.33px;line-height:15px;letter-spacing:-0.1px;">$147,202.32</span>
<div class="a" style="left:1057px;top:1024px;width:767px;height:18px;background:#e8f2fd;"></div>
<span class="t" style="left:1176px;top:1024px;font-size:13.33px;line-height:15px;">Centre</span>
<span class="t" style="left:1304.2px;top:1024px;font-size:13.33px;line-height:15px;">Bicyclette Bourges Nord</span>
<span class="t" style="left:1531.61px;top:1024px;font-size:13.33px;line-height:15px;letter-spacing:-0.1px;">$2,099.25</span>
<span class="t" style="left:1657.08px;top:1024px;font-size:13.33px;line-height:15px;letter-spacing:-0.1px;">0.29%</span>
<span class="t" style="left:1734.99px;top:1024px;font-size:13.33px;line-height:15px;letter-spacing:-0.1px;">$149,301.57</span>
<span class="t" style="left:1176px;top:1041px;font-size:13.33px;line-height:15px;">Champagne-</span>
<span class="t" style="left:1304.2px;top:1041px;font-size:13.33px;line-height:15px;">Orléans VTT</span>
<span class="t" style="left:1531.55px;top:1041px;font-size:13.33px;line-height:15px;letter-spacing:-0.1px;">$6,655.90</span>
<span class="t" style="left:1657.08px;top:1041px;font-size:13.33px;line-height:15px;letter-spacing:-0.1px;">0.93%</span>
<span class="t" style="left:1734.99px;top:1041px;font-size:13.33px;line-height:15px;letter-spacing:-0.1px;">$155,957.47</span>
<div class="a" style="left:1057px;top:1076px;width:765px;height:2px;background:#e36c0a;"></div>
<div class="a" style="left:1057px;top:1084px;width:330px;height:33px;background:#f0f0f0;overflow:hidden;"><div class="a" style="left:13.3px;top:20.5px;width:64px;height:34px;border-radius:7px;background:linear-gradient(180deg,#eef7fc 0,#c9e3f3 45%,#9fcbe6 100%);border:3px solid #0b6bb0;box-sizing:border-box;box-shadow:0 0 0 1px #3a5a70, -1px 1px 3px 1px rgba(40,40,40,.55);"></div><svg class="a" style="left:0px;top:0px;" width="330" height="33" viewBox="0 0 330 33"><path d="M79.5 4 H93.4 L70.3 41.8 H56.4 Z" fill="#000"/></svg><span class="t" style="left:84.33px;top:21px;font-size:29.3px;line-height:33px;color:#003a82;font-weight:bold;letter-spacing:-0.113px;-webkit-text-stroke:.5px #003a82;">Crystal Migration</span></div>
<span class="t" style="left:1391.51px;top:1085px;font-size:12.3px;line-height:14px;color:#0000ff;font-weight:bold;letter-spacing:0.412px;">Crystal Migration Services  Samples</span>
<span class="t" style="left:1686.51px;top:1085px;font-size:12.3px;line-height:14px;color:#0000ff;font-weight:bold;letter-spacing:0.654px;">Contact us by Email</span>
<div class="a" style="left:1387px;top:1100px;width:440px;height:17px;overflow:hidden;"><span class="t" style="left:4.4px;top:8px;font-size:12px;line-height:14px;color:#6495ed;letter-spacing:0.049px;">Crystal Migration Services provides leading-edge conversion services that get</span></div>
<!-- taskbar -->
<div class="a" style="left:0px;top:1160px;width:1920px;height:40px;background:linear-gradient(180deg,#10182a 0,#10182a 1px,#8a96a8 1px,#8a96a8 2px,#3a4a62 2px,#2b3a52 30%,#25334a 60%,#222f44 100%);"></div>
<div class="a" style="left:790px;top:1162px;width:900px;height:38px;background:linear-gradient(90deg,rgba(255,255,255,0) 0,rgba(255,255,255,.07) 8%,rgba(255,255,255,.05) 25%,rgba(255,255,255,.09) 45%,rgba(255,255,255,.1) 60%,rgba(255,255,255,.04) 85%,rgba(255,255,255,0) 100%);"></div>
<div class="a" style="left:8px;top:1161px;width:38px;height:38px;border-radius:50%;background:radial-gradient(circle at 50% 95%,#4fe3ff 0,#1fa4e0 22%,#1b6fb8 45%,#2a5a9a 62%,#5f8fc4 80%,#a9c6e6 100%);box-shadow:0 0 0 1px rgba(20,40,70,.8), inset 0 0 3px 1px rgba(255,255,255,.5);"></div>
<svg class="a" style="left:8px;top:1161px;" width="38" height="38" viewBox="0 0 38 38"><g transform="translate(19,19) scale(1.28) translate(-18,-18.5)"><path d="M12.5 12.5 C15 10.5 17 10.5 18.8 11.6 L17.3 17.8 C15.5 16.8 13.5 17 11 18.8Z" fill="#f0541e"/><path d="M20.3 12.2 C22.5 13.3 24.5 13 27 11.2 L25.4 17.5 C23 19.2 21 19.4 18.8 18.3Z" fill="#8cc63f"/><path d="M10.6 20.2 C13 18.4 15 18.3 16.9 19.3 L15.3 25.6 C13.5 24.6 11.5 24.8 9 26.6Z" fill="#2ea3e8"/><path d="M18.4 19.8 C20.5 20.9 22.6 20.7 25 19 L23.4 25.3 C21 27 19 27.1 16.8 26Z" fill="#fdc22a"/></g><ellipse cx="19" cy="9.5" rx="13" ry="7" fill="#fff" opacity=".2"/></svg>
<div class="a" style="left:60px;top:1161px;width:58px;height:38px;border:1px solid rgba(200,208,220,.8);border-radius:3px;box-sizing:border-box;background:linear-gradient(135deg,rgba(190,198,210,.85) 0,rgba(140,150,166,.7) 30%,rgba(84,98,118,.62) 58%,rgba(70,84,106,.6) 100%);box-shadow:0 0 0 1px rgba(20,30,45,.7);"></div>
<div class="a" style="left:246px;top:1161px;width:58px;height:38px;border:1px solid rgba(200,208,220,.8);border-radius:3px;box-sizing:border-box;background:linear-gradient(135deg,rgba(190,198,210,.85) 0,rgba(140,150,166,.7) 30%,rgba(84,98,118,.62) 58%,rgba(70,84,106,.6) 100%);box-shadow:0 0 0 1px rgba(20,30,45,.7);"></div>
<div class="a" style="left:680px;top:1161px;width:58px;height:38px;border:1px solid rgba(200,208,220,.8);border-radius:3px;box-sizing:border-box;background:linear-gradient(135deg,rgba(190,198,210,.85) 0,rgba(140,150,166,.7) 30%,rgba(84,98,118,.62) 58%,rgba(70,84,106,.6) 100%);box-shadow:0 0 0 1px rgba(20,30,45,.7);"></div>
<div class="a" style="left:742px;top:1161px;width:58px;height:38px;border:1px solid rgba(200,208,220,.8);border-radius:3px;box-sizing:border-box;background:linear-gradient(135deg,rgba(190,198,210,.85) 0,rgba(140,150,166,.7) 30%,rgba(84,98,118,.62) 58%,rgba(70,84,106,.6) 100%);box-shadow:0 0 0 1px rgba(20,30,45,.7);"></div>
<div class="a" style="left:671px;top:1161px;width:5px;height:38px;border:1px solid rgba(245,248,255,.95);border-left:none;border-radius:0 3px 3px 0;box-sizing:border-box;background:rgba(120,132,150,.7);"></div><div class="a" style="left:668px;top:1161px;width:5px;height:38px;border:1px solid rgba(245,248,255,.95);border-left:none;border-radius:0 3px 3px 0;box-sizing:border-box;background:rgba(160,170,186,.8);"></div><div class="a" style="left:618px;top:1161px;width:51px;height:38px;border:1px solid rgba(245,248,255,.95);border-radius:3px;box-sizing:border-box;background:linear-gradient(135deg,rgba(245,247,250,.95) 0,rgba(215,221,230,.9) 35%,rgba(160,170,186,.85) 60%,rgba(190,198,212,.9) 100%);box-shadow:0 0 0 1px rgba(20,30,45,.7);"></div>
<svg class="a" style="left:0;top:0;pointer-events:none" width="1920" height="1200" viewBox="0 0 1920 1200"><defs><linearGradient id="sc" x1="0" y1="0" x2="1" y2="1"><stop offset="0" stop-color="#c8cce4"/><stop offset="1" stop-color="#a4a8c4"/></linearGradient><linearGradient id="fo" x1="0" y1="0" x2="0" y2="1"><stop offset="0" stop-color="#fbe9a0"/><stop offset="1" stop-color="#e8c050"/></linearGradient><radialGradient id="ff" cx=".5" cy=".4" r=".6"><stop offset="0" stop-color="#3a8ae0"/><stop offset="1" stop-color="#163a90"/></radialGradient></defs><g transform="translate(74.5,1165)"><rect x="1" y="1" width="26" height="26" fill="url(#sc)" stroke="#4a4a52" stroke-width="2"/><rect x="2.5" y="2.5" width="23" height="23" fill="none" stroke="#e4e6f2" stroke-width="1"/><path d="M9 23C8 16 11 11 17 10.5V6.5L24 6.5V13.5L20 13.5V14C15 14 12 17 13 23z" fill="#2a2a90"/><path d="M13.5 6.5H24V17L20.8 13.8L17 10z" fill="#3a3aa8"/></g><g transform="translate(136.5,1168)"><path d="M4 1L24 3.5V24L4 26z" fill="#6aa8e0" stroke="#3a78c0" stroke-width=".8"/><path d="M1 2L22 .5V25.5L1 24z" fill="#8cc4f0" stroke="#4a88d0" stroke-width=".8"/><circle cx="11.5" cy="13" r="9.2" fill="#f58220" stroke="#fbb060" stroke-width="1"/><path d="M8.5 8V18L17 13z" fill="#fff"/></g><g transform="translate(197.5,1164)"><g transform="translate(10,0) scale(.95)"><path d="M.5 .5H15.5L21.5 6.5V27.5H.5z" fill="url(#pg)" stroke="#8d98ae" stroke-width="1"/><path d="M15.5 .5V6.5H21.5z" fill="#dfe6f2" stroke="#8d98ae" stroke-width=".8"/><path d="M3 8h8M13 10.5h6M3 10.5h8M3 13h8M13 13h6M3 15.5h6" stroke="#b9c4d8" stroke-width="1"/><rect x="3" y="20" width="4" height="5.5" fill="#f05a28"/><rect x="9" y="18" width="4" height="7.5" fill="#2a7ae0"/><rect x="15" y="15" width="4" height="10.5" fill="#2ea82e"/></g><path d="M1 7V27.5H21.5z" fill="#7d95e8" stroke="#4a62c0" stroke-width=".9" opacity=".95"/><path d="M5 17V23.5H11.5z" fill="#c9d6f6" stroke="#4a62c0" stroke-width=".7"/><rect x=".5" y="27.5" width="26" height="4" fill="#f2c84a" stroke="#b08a20" stroke-width=".8"/><path d="M3 28v2M5.5 28v1.3M8 28v2M10.5 28v1.3M13 28v2M15.5 28v1.3M18 28v2M20.5 28v1.3M23 28v2" stroke="#fff8d0" stroke-width=".9"/></g><g transform="translate(259,1166)"><path d="M1 6H10L12 3.5H29V24H1z" fill="#e8c868" stroke="#b8963a" stroke-width=".8"/><rect x="3" y="2" width="4" height="2.5" fill="#2ea82e"/><rect x="11" y="3" width="4" height="2.5" fill="#e03020"/><rect x="19" y="4.5" width="4" height="2.5" fill="#2a8ae0"/><path d="M.5 8H30.5L29.5 25.5H1.5z" fill="url(#fo)" stroke="#c8a040" stroke-width=".8"/><path d="M5.5 27V19C5.5 17 7 16 9 16H23C25 16 26.5 17 26.5 19V27H22V21.5H10V27z" fill="#7ac4f0" stroke="#3a88c8" stroke-width=".9"/><path d="M7 17.5H25" stroke="#d8f0ff" stroke-width="1.2"/></g><g transform="translate(321.5,1166)"><path d="M1 19L17 10L30 17L13 27z" fill="#d8cc50" stroke="#7a7020" stroke-width=".9"/><path d="M1 15.5L16 7L28 13.5L12 23z" fill="#f2e870" stroke="#8a8028" stroke-width=".9"/><path d="M6 15.5L16 10M9 17.5L19 12M12 19.5L22 14" stroke="#b8ae40" stroke-width=".8"/><path d="M13 17L15 12L27 1.5L30.5 5L18 15.5z" fill="#f2c040" stroke="#5a4a10" stroke-width=".9"/><path d="M27 1.5L30.5 5L29 6.3L25.5 2.8z" fill="#f08a9a"/><path d="M13 17L15 12L18 15.5z" fill="#f8e8c8" stroke="#5a4a10" stroke-width=".7"/><path d="M13 17l1.2-.4" stroke="#000" stroke-width="1.2"/></g><g transform="translate(384,1164)"><text x="1.5" y="29.5" font-family="'Liberation Sans',serif" font-size="39" font-weight="bold" fill="#3aaff0" text-anchor="start" >e</text><path d="M3.5 21C8 9 20 0 27.5 2.5C30.5 4 29 9 26 12.5" fill="none" stroke="#f5c020" stroke-width="2.4" stroke-linecap="round"/><path d="M5 19C1.5 25.5 1 30.5 4.5 31C7 31.3 10 29.5 13 27" fill="none" stroke="#f5c020" stroke-width="2.4" stroke-linecap="round"/></g><g transform="translate(446,1165)"><circle cx="15" cy="15" r="13.5" fill="url(#ff)"/><path d="M15 1.5C8 1.5 1.5 7 1.5 15.5C1.5 23 7.5 29 15 29C22.5 29 28.5 23 28.5 15.5C28.5 12 27.5 9 25.5 7C26.5 10 26 12.5 25 14C25 11 23 8.5 20.5 7.5C22 10 21.5 12.5 20 13.5C18 11.5 14.5 11.5 12.5 13C14.5 13.5 15.5 14.5 15.5 15.5C13.5 16 11.5 16 10 17.5C12 19.5 15 20 18 18.5C17 21.5 14 23 10.5 22C7.5 21 5.5 18 6 14C4.5 12.5 4 10.5 4.5 8C5.5 9 6.5 9.5 7.5 9.5C8.5 6 11 3 15 1.5z" fill="#f06a18"/><path d="M4.5 8C5.5 9 6.5 9.5 7.5 9.5C8.5 6 11 3 15 1.5C11.5 2.5 6.5 4.5 4.5 8z" fill="#f8b830"/><path d="M10.5 22C14 23 17 21.5 18 18.5C20 20 19 25 15 27C10 27.5 6 24 6 20C7 21 8.5 21.8 10.5 22z" fill="#e04a10"/></g><g transform="translate(508,1167)"><rect x=".75" y=".75" width="28.5" height="24" fill="#fff" stroke="#9aa4b4" stroke-width="1.5"/><path d="M3 6h5M3 9.5h5M3 13h5M3 16.5h5M3 20h5" stroke="#2a5ad0" stroke-width="1.4" stroke-dasharray="1.2 .8 10"/><rect x="10.5" y="4" width="4.5" height="4.5" fill="#5a9ad8" stroke="#c8c8c8" stroke-width=".5"/><rect x="16.5" y="4" width="4.5" height="4.5" fill="#e08040" stroke="#c8c8c8" stroke-width=".5"/><rect x="22.5" y="4" width="4.5" height="4.5" fill="#c03020" stroke="#c8c8c8" stroke-width=".5"/><rect x="10.5" y="10" width="4.5" height="4.5" fill="#4a6ab0" stroke="#c8c8c8" stroke-width=".5"/><rect x="16.5" y="10" width="4.5" height="4.5" fill="#3a8a6a" stroke="#c8c8c8" stroke-width=".5"/><rect x="22.5" y="10" width="4.5" height="4.5" fill="#d07030" stroke="#c8c8c8" stroke-width=".5"/><rect x="10.5" y="16" width="4.5" height="4.5" fill="#3a7a8a" stroke="#c8c8c8" stroke-width=".5"/><rect x="16.5" y="16" width="4.5" height="4.5" fill="#5ab0e0" stroke="#c8c8c8" stroke-width=".5"/><rect x="22.5" y="16" width="4.5" height="4.5" fill="#b03020" stroke="#c8c8c8" stroke-width=".5"/></g><g transform="translate(571,1166)"><circle cx="14.5" cy="14.5" r="14" fill="#e8403a"/><path d="M14.5 14.5L2.4 7.5A14 14 0 0 0 9 27.4z" fill="#3aa858"/><path d="M14.5 14.5L9 27.4A14 14 0 0 0 28.5 14.5A14 14 0 0 0 27.5 9.5z" fill="#fcc82a"/><path d="M14.5 14.5L20.5 25L9 27.4z" fill="#fcc82a"/><path d="M2.4 7.5L8.8 18.2L14.5 14.5z" fill="#3aa858"/><circle cx="14.5" cy="14.5" r="6.6" fill="#fff"/><circle cx="14.5" cy="14.5" r="5.2" fill="#4a8af0"/></g><g transform="translate(628,1164)"><g transform="translate(10,0) scale(.95)"><path d="M.5 .5H15.5L21.5 6.5V27.5H.5z" fill="url(#pg)" stroke="#8d98ae" stroke-width="1"/><path d="M15.5 .5V6.5H21.5z" fill="#dfe6f2" stroke="#8d98ae" stroke-width=".8"/><path d="M3 8h8M13 10.5h6M3 10.5h8M3 13h8M13 13h6M3 15.5h6" stroke="#b9c4d8" stroke-width="1"/><rect x="3" y="20" width="4" height="5.5" fill="#f05a28"/><rect x="9" y="18" width="4" height="7.5" fill="#2a7ae0"/><rect x="15" y="15" width="4" height="10.5" fill="#2ea82e"/></g><path d="M1 7V27.5H21.5z" fill="#7d95e8" stroke="#4a62c0" stroke-width=".9" opacity=".95"/><path d="M5 17V23.5H11.5z" fill="#c9d6f6" stroke="#4a62c0" stroke-width=".7"/><rect x=".5" y="27.5" width="26" height="4" fill="#f2c84a" stroke="#b08a20" stroke-width=".8"/><path d="M3 28v2M5.5 28v1.3M8 28v2M10.5 28v1.3M13 28v2M15.5 28v1.3M18 28v2M20.5 28v1.3M23 28v2" stroke="#fff8d0" stroke-width=".9"/></g><g transform="translate(694,1164)"><path d="M5 3C8 0 12 1.5 13 2.5C21 1 28 8 26.5 16C29 19.5 27.5 25 24 27C20.5 29.5 17 28 16 27C8 28.5 1 21.5 2.5 13.5C0 10 2 5 5 3z" fill="#12a5f4"/><text x="7.5" y="23" font-family="'Liberation Sans',serif" font-size="22.5" font-weight="bold" fill="#fff" text-anchor="start" >S</text><path d="M18 18C21 15.5 25.5 16 28 19C30.5 22 30 26.5 27.5 28.5L28 31.5L24.5 30C21.5 30.5 18.5 29 17 26C16 23.5 16 20 18 18z" fill="#fff" stroke="#7ab800" stroke-width="1.6"/></g><g transform="translate(755,1164)"><g transform="scale(0.98)"><path d="M7 0C18 1 29 6 29 13C29 17 26 19.5 21.5 20C24 17.5 25 14.5 23.5 11C21.5 6.5 15 2 7 0z" fill="#1c3fa8"/><path d="M14 9L28 21.5L14 34L0 21.5z" fill="#14b814"/><path d="M14 9L28 21.5H0z" fill="#58e058"/><path d="M14 9V34L0 21.5z" fill="#30d030" opacity=".75"/><path d="M14 9L28 21.5H14z" fill="#b0f8b0" opacity=".6"/><path d="M14 21.5L28 21.5L14 34z" fill="#0a8a0a"/><path d="M14 9V34" stroke="#d8ffd8" stroke-width=".6" opacity=".7"/></g></g></svg>
<span class="t" style="left:1666.57px;top:1170px;font-size:12.87px;line-height:15px;color:#fff;letter-spacing:0.875px;">EN</span>
<div class="a" style="left:1690px;top:1170.5px;width:15px;height:15px;border-radius:50%;background:radial-gradient(circle at 50% 30%,#4f7df0 0,#1a3fd0 50%,#0a1fa0 100%);box-shadow:0 0 0 1px #cfd8ea, 0 0 0 2px rgba(60,70,90,.8);"></div>
<span class="t" style="left:1693.65px;top:1172px;font-size:12.5px;line-height:14px;color:#fff;font-weight:bold;">?</span>
<svg class="a" style="left:1712px;top:1166px;" width="16" height="24" viewBox="0 0 16 24"><rect x="6.5" y="3.5" width="5" height="3" fill="none" stroke="#fff"/><rect x="3.5" y="5.5" width="5" height="3" fill="#24364f" stroke="#fff"/><path d="M4.5 15.5h5l-2.5 2.8z" fill="#fff"/></svg>
<svg class="a" style="left:1731px;top:1176px;" width="14" height="10" viewBox="0 0 14 10"><path d="M2.5 7.5h8L6.5 3z" fill="#fff"/></svg>
<svg class="a" style="left:1752px;top:1172px;" width="20" height="18" viewBox="0 0 20 18"><path d="M3.5 2v15" stroke="#fff" stroke-width="1.4"/><path d="M4.5 3 C7 1.5 9 4 12.5 3 V10 C9 11 7 8.5 4.5 10Z" fill="#fff"/><circle cx="13.5" cy="12" r="4.2" fill="#e02020" stroke="#fff" stroke-width=".6"/><path d="M11.7 10.2l3.6 3.6M15.3 10.2l-3.6 3.6" stroke="#fff" stroke-width="1.4"/></svg>
<svg class="a" style="left:1777px;top:1172px;" width="18" height="18" viewBox="0 0 18 18"><rect x="2.5" y="3.5" width="7" height="11" rx="1" fill="none" stroke="#fff" stroke-width="1.3"/><rect x="4.5" y="2" width="3" height="1.5" fill="#fff"/><path d="M8 6h6v3.5c0 2-1.2 3-3 3s-3-1-3-3z" fill="#fff"/><path d="M9.5 3v3M12.5 3v3M11 12v4h-3" stroke="#fff" stroke-width="1.3" fill="none"/></svg>
<svg class="a" style="left:1801px;top:1172px;" width="18" height="16" viewBox="0 0 18 16"><rect x="1" y="11" width="2.2" height="3" fill="#fff"/><rect x="4.4" y="9" width="2.2" height="5" fill="#fff"/><rect x="7.8" y="6.5" width="2.2" height="7.5" fill="#fff"/><rect x="11.2" y="4" width="2.2" height="10" fill="#fff"/><rect x="14.6" y="1.5" width="2.2" height="12.5" fill="#8894a6"/></svg>
<span class="t" style="left:1844.18px;top:1166px;font-size:11.88px;line-height:14px;color:#fff;letter-spacing:-0.281px;">3:55 PM</span>
<span class="t" style="left:1835.78px;top:1183px;font-size:12px;line-height:14px;color:#fff;letter-spacing:-0.273px;">04/10/2013</span>
<div class="a" style="left:1906px;top:1161px;width:14px;height:39px;border-left:1px solid rgba(190,200,215,.7);box-sizing:border-box;background:linear-gradient(135deg,rgba(200,208,220,.55) 0,rgba(120,132,150,.35) 45%,rgba(50,64,85,.3) 100%);box-shadow:-1px 0 0 rgba(10,20,35,.8);"></div>
</body></html>
